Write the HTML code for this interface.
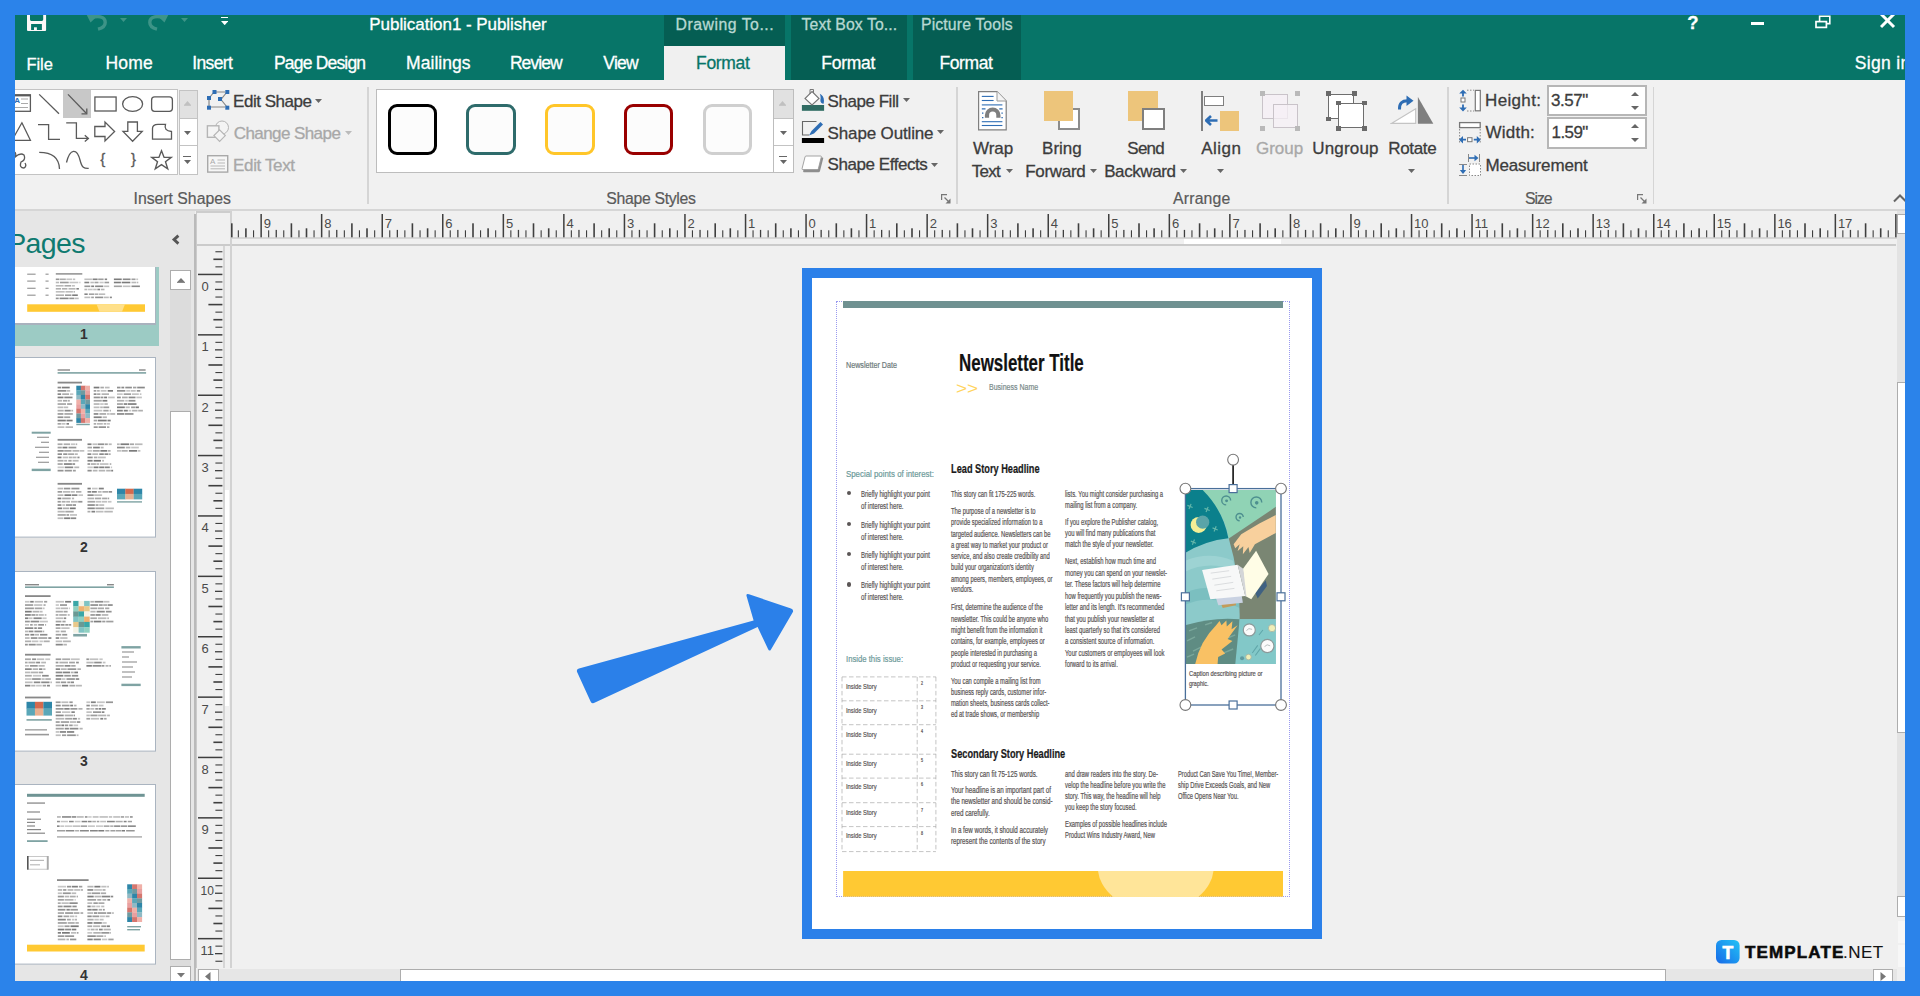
<!DOCTYPE html>
<html lang="en"><head><meta charset="utf-8"><title>Publication1 - Publisher</title>
<style>
html,body{margin:0;padding:0}
body{width:1920px;height:996px;overflow:hidden;background:#2b83ea;position:relative;font-family:"Liberation Sans",sans-serif}
#win{position:absolute;left:15px;top:15px;width:1890px;height:966px;overflow:hidden;background:#f0f0f0}
#abs{position:absolute;left:-15px;top:-15px;width:1920px;height:996px}
.t{position:absolute;white-space:nowrap;display:block}
.r{position:absolute;display:block;box-sizing:border-box}
.doc{position:absolute;transform-origin:0 0;white-space:nowrap;display:block}
</style></head>
<body>
<div id="win"><div id="abs">
<div class="r" style="left:15.0px;top:15.0px;width:1890.0px;height:65.0px;background:#077568;"></div>
<div class="r" style="left:664.0px;top:15.0px;width:121.0px;height:65.0px;background:#055e53;"></div>
<div class="r" style="left:791.0px;top:15.0px;width:116.0px;height:65.0px;background:#055e53;"></div>
<div class="r" style="left:913.0px;top:15.0px;width:108.0px;height:65.0px;background:#055e53;"></div>
<div class="r" style="left:664.0px;top:46.0px;width:121.0px;height:35.0px;background:#f0f0f0;"></div>
<svg class="r" style="left:27.0px;top:13.0px;" width="20" height="19" viewBox="0 0 20 19"><path d="M0 0H19.1V17Q19.1 18 18.1 18H1Q0 18 0 17Z M3 0V6.6Q3 7.9 4.3 7.9H14.9Q16.2 7.9 16.2 6.6V0Z M4.1 11V17H14.9V11Z" fill="#fbf7f7" fill-rule="evenodd"/><rect x="7" y="14.3" width="2.9" height="3" fill="#fbf7f7"/></svg>
<svg class="r" style="left:86.0px;top:13.0px;" width="24" height="20" viewBox="0 0 24 20"><path d="M5 5.2 C11 2.5 19.2 3 19.2 9.5 C19.2 13.5 16 15.2 12 16.2" fill="none" stroke="#3d9487" stroke-width="3.4"/><path d="M0.5 1.5 H13 L4.5 9.5Z" fill="#3d9487"/></svg>
<svg class="r" style="left:120.0px;top:18.0px;" width="7" height="4" viewBox="0 0 7 4"><path d="M0 0H7L3.5 4Z" fill="#3d9487"/></svg>
<svg class="r" style="left:148.0px;top:13.0px;" width="24" height="20" viewBox="0 0 24 20"><path d="M16 5.2 C10 2.5 1.8 3 1.8 9.5 C1.8 13.5 5 15.2 9 16.2" fill="none" stroke="#3d9487" stroke-width="3.4"/><path d="M20.5 1.5 H8 L16.5 9.5Z" fill="#3d9487"/></svg>
<svg class="r" style="left:181.0px;top:18.0px;" width="7" height="4" viewBox="0 0 7 4"><path d="M0 0H7L3.5 4Z" fill="#3d9487"/></svg>
<div class="r" style="left:221.0px;top:16.7px;width:7.4px;height:1.4px;background:#fff;"></div>
<svg class="r" style="left:221.0px;top:20.7px;" width="7.4" height="4.2" viewBox="0 0 7.4 4.2"><path d="M0 0H7.4L3.7 4.2Z" fill="#fff"/></svg>
<span class="t" style="left:369.3px;top:16.1px;font-size:17px;line-height:17px;letter-spacing:-0.05px;color:#fff;-webkit-text-stroke:0.3px #fff;">Publication1 - Publisher</span>
<span class="t" style="left:675.5px;top:17.1px;font-size:15.8px;line-height:15.8px;letter-spacing:0.52px;color:#b7d8d2;-webkit-text-stroke:0.3px #b7d8d2;">Drawing To...</span>
<span class="t" style="left:801.6px;top:17.1px;font-size:15.8px;line-height:15.8px;letter-spacing:0.08px;color:#b7d8d2;-webkit-text-stroke:0.3px #b7d8d2;">Text Box To...</span>
<span class="t" style="left:921.0px;top:17.1px;font-size:15.8px;line-height:15.8px;letter-spacing:0.13px;color:#b7d8d2;-webkit-text-stroke:0.3px #b7d8d2;">Picture Tools</span>
<span class="t" style="left:26.4px;top:56.1px;font-size:16.5px;line-height:16.5px;letter-spacing:-0.01px;color:#fff;-webkit-text-stroke:0.3px #fff;">File</span>
<span class="t" style="left:105.5px;top:55.1px;font-size:17.5px;line-height:17.5px;letter-spacing:0.16px;color:#fff;-webkit-text-stroke:0.3px #fff;">Home</span>
<span class="t" style="left:192.3px;top:55.1px;font-size:17.5px;line-height:17.5px;letter-spacing:-0.65px;color:#fff;-webkit-text-stroke:0.3px #fff;">Insert</span>
<span class="t" style="left:274.0px;top:55.1px;font-size:17.5px;line-height:17.5px;letter-spacing:-0.81px;color:#fff;-webkit-text-stroke:0.3px #fff;">Page Design</span>
<span class="t" style="left:406.1px;top:55.1px;font-size:17.5px;line-height:17.5px;letter-spacing:0.04px;color:#fff;-webkit-text-stroke:0.3px #fff;">Mailings</span>
<span class="t" style="left:509.9px;top:55.1px;font-size:17.5px;line-height:17.5px;letter-spacing:-0.94px;color:#fff;-webkit-text-stroke:0.3px #fff;">Review</span>
<span class="t" style="left:603.3px;top:55.1px;font-size:17.5px;line-height:17.5px;letter-spacing:-0.75px;color:#fff;-webkit-text-stroke:0.3px #fff;">View</span>
<span class="t" style="left:696.1px;top:55.1px;font-size:17.5px;line-height:17.5px;letter-spacing:-0.35px;color:#077568;-webkit-text-stroke:0.3px #077568;">Format</span>
<span class="t" style="left:821.3px;top:55.1px;font-size:17.5px;line-height:17.5px;letter-spacing:-0.28px;color:#fff;-webkit-text-stroke:0.3px #fff;">Format</span>
<span class="t" style="left:939.4px;top:55.1px;font-size:17.5px;line-height:17.5px;letter-spacing:-0.39px;color:#fff;-webkit-text-stroke:0.3px #fff;">Format</span>
<span class="t" style="left:1854.8px;top:55.1px;font-size:17.5px;line-height:17.5px;letter-spacing:0.31px;color:#fff;-webkit-text-stroke:0.3px #fff;">Sign in</span>
<span class="t" style="left:1687.2px;top:14.1px;font-size:18.5px;line-height:18.5px;letter-spacing:0.00px;color:#fff;-webkit-text-stroke:0.3px #fff;font-weight:bold;">?</span>
<div class="r" style="left:1751.0px;top:22.0px;width:13.0px;height:3.0px;background:#fff;"></div>
<svg class="r" style="left:1815.0px;top:13.0px;" width="16" height="16" viewBox="0 0 16 16"><path d="M4.6 8V3.2H14.8V10.6H11.8" fill="none" stroke="#fff" stroke-width="1.6"/><rect x="1" y="8.6" width="10.4" height="5.8" fill="none" stroke="#fff" stroke-width="1.7"/></svg>
<svg class="r" style="left:1880.0px;top:13.0px;" width="16" height="16" viewBox="0 0 16 16"><path d="M1 1L14 14M14 1L1 14" stroke="#fff" stroke-width="3"/></svg>
<div class="r" style="left:15.0px;top:80.0px;width:1890.0px;height:129.5px;background:#f1f1f1;"></div>
<div class="r" style="left:15.0px;top:209.0px;width:1890.0px;height:1.6px;background:#d6d6d6;"></div>
<div class="r" style="left:367.3px;top:86.5px;width:1.6px;height:117.0px;background:#d5d5d5;"></div>
<div class="r" style="left:956.0px;top:86.5px;width:1.6px;height:117.0px;background:#d5d5d5;"></div>
<div class="r" style="left:1447.2px;top:86.5px;width:1.6px;height:117.0px;background:#d5d5d5;"></div>
<div class="r" style="left:1652.6px;top:86.5px;width:1.6px;height:117.0px;background:#d5d5d5;"></div>
<div class="r" style="left:10.0px;top:89.0px;width:167.8px;height:85.7px;background:#fff;border:1px solid #c3c3c3;"></div>
<div class="r" style="left:63.2px;top:90.2px;width:27.8px;height:27.6px;background:#c8c8c8;"></div>
<svg class="r" style="left:0;top:0" width="200" height="180" viewBox="0 0 200 180"><rect x="9" y="94.9" width="21.4" height="16.4" fill="#fff" stroke="#5a5a5a" stroke-width="1.3"/><rect x="9" y="94.4" width="21.8" height="2" fill="#5a5a5a"/><path d="M21 99H28M21 103.5H28M15 107.5H28" stroke="#aaa" stroke-width="1"/><path d="M39.2 94.4L59 113.7" fill="none" stroke="#5a5a5a" stroke-width="1.3" stroke-width="1.1"/><path d="M68 94.4L86 113" fill="none" stroke="#5a5a5a" stroke-width="1.3" stroke-width="1.1"/><path d="M86.8 108.5V113.8H81.5" fill="none" stroke="#5a5a5a" stroke-width="1.3" stroke-width="1.6"/><rect x="94.9" y="97" width="21.2" height="14" fill="none" stroke="#5a5a5a" stroke-width="1.3" stroke-width="1.5"/><ellipse cx="132.6" cy="104" rx="10" ry="7.3" fill="none" stroke="#5a5a5a" stroke-width="1.3"/><rect x="151.6" y="96.9" width="20.8" height="14.4" rx="3" fill="none" stroke="#5a5a5a" stroke-width="1.3"/><path d="M21.9 122.8L30.4 140.3H12Z" fill="none" stroke="#5a5a5a" stroke-width="1.3" stroke-width="1.4"/><path d="M38 124.6H48.6V139.4H60" fill="none" stroke="#5a5a5a" stroke-width="1.3" stroke-width="1.1"/><path d="M66.2 122.8H76.4V138.4H88.4" fill="none" stroke="#5a5a5a" stroke-width="1.3" stroke-width="1.2"/><path d="M84.8 135.3L88.4 138.4L84.8 141.5" fill="none" stroke="#5a5a5a" stroke-width="1.3" stroke-width="1.2"/><path d="M94.8 126.5H105V122L114.6 131.5L105 141V136.5H94.8Z" fill="none" stroke="#5a5a5a" stroke-width="1.3" stroke-width="1.4"/><path d="M127.8 122H137.4V131.4H142.2L132.6 141.2L123 131.4H127.8Z" fill="none" stroke="#5a5a5a" stroke-width="1.3" stroke-width="1.4"/><path d="M152.5 139.2V128.5Q152.5 124.3 158 124.3H165.5Q163.5 131 171.5 131.5V139.2Z" fill="none" stroke="#5a5a5a" stroke-width="1.3" stroke-width="1.3"/><path d="M15 152 Q17 156 14 158 Q20 152 24 155 Q26 160 21 162 Q19 168 24 168 Q27 166 25 163" fill="none" stroke="#5a5a5a" stroke-width="1.3" stroke-width="1.2"/><path d="M39.2 152.4Q59 152.4 59.5 169" fill="none" stroke="#5a5a5a" stroke-width="1.3" stroke-width="1.1"/><path d="M66.5 162.5C70 148 77 148 80 160C82 168 84 168.5 88.7 168.3" fill="none" stroke="#5a5a5a" stroke-width="1.3" stroke-width="1.3"/></svg>
<span class="t" style="left:100.2px;top:151.1px;font-size:15px;line-height:15px;letter-spacing:0.00px;color:#5a5a5a;-webkit-text-stroke:0.3px #5a5a5a;">{</span>
<span class="t" style="left:131.1px;top:151.1px;font-size:15px;line-height:15px;letter-spacing:0.00px;color:#5a5a5a;-webkit-text-stroke:0.3px #5a5a5a;">}</span>
<svg class="r" style="left:150.0px;top:149.0px;" width="24" height="22" viewBox="0 0 24 22"><path d="M11.5 1.8L14.1 8.4H21.2L15.5 12.8L17.7 19.8L11.5 15.6L5.3 19.8L7.5 12.8L1.8 8.4H8.9Z" fill="none" stroke="#5a5a5a" stroke-width="1.4"/></svg>
<span class="t" style="left:14.2px;top:96.6px;font-size:8px;line-height:8px;font-weight:bold;color:#2e6db4">A</span>
<div class="r" style="left:178.8px;top:89.5px;width:18.8px;height:85.2px;background:#fff;border:1px solid #c3c3c3;"></div>
<div class="r" style="left:179.8px;top:90.5px;width:16.8px;height:27.5px;background:#e1e1e1;"></div>
<div class="r" style="left:179.8px;top:118.0px;width:16.8px;height:1.0px;background:#c3c3c3;"></div>
<div class="r" style="left:179.8px;top:145.2px;width:16.8px;height:1.0px;background:#c3c3c3;"></div>
<svg class="r" style="left:184.0px;top:101.0px;" width="7" height="5" viewBox="0 0 7 5"><path d="M0 4H7L3.5 0Z" fill="#c0c0c0"/><rect x="0" y="4.2" width="7" height="0.8" fill="#c0c0c0"/></svg>
<svg class="r" style="left:183.9px;top:130.7px;" width="7" height="4" viewBox="0 0 7 4"><path d="M0 0H7L3.5 4Z" fill="#666"/></svg>
<div class="r" style="left:183.4px;top:155.5px;width:8.0px;height:1.3px;background:#666;"></div>
<svg class="r" style="left:183.9px;top:160.0px;" width="7" height="4" viewBox="0 0 7 4"><path d="M0 0H7L3.5 4Z" fill="#666"/></svg>
<svg class="r" style="left:206.9px;top:90.0px;" width="23" height="20" viewBox="0 0 23 20"><path d="M8 2H18M20 2L14 9.5L20 17M3 17H18M2 9V17M3 7L7 2" stroke="#888" stroke-width="1.2" fill="none"/><rect x="5.5" y="0" width="4" height="4" fill="#2e6db4"/><rect x="18.3" y="0" width="4" height="4" fill="#2e6db4"/><rect x="0" y="6" width="4" height="4" fill="#2e6db4"/><rect x="11" y="7" width="4" height="4" fill="#2e6db4"/><rect x="0" y="15.7" width="4" height="4" fill="#2e6db4"/><rect x="18.3" y="15.7" width="4" height="4" fill="#2e6db4"/></svg>
<span class="t" style="left:233.1px;top:93.1px;font-size:17px;line-height:17px;letter-spacing:-0.49px;color:#3c3c3c;-webkit-text-stroke:0.3px #3c3c3c;">Edit Shape</span>
<svg class="r" style="left:315.0px;top:98.6px;" width="7" height="4" viewBox="0 0 7 4"><path d="M0 0H7L3.5 4Z" fill="#666"/></svg>
<svg class="r" style="left:206.0px;top:120.0px;" width="24" height="24" viewBox="0 0 24 24"><circle cx="16" cy="7.5" r="6.5" fill="#f4f4f4" stroke="#b5b5b5" stroke-width="1"/><rect x="1.4" y="5.8" width="11.5" height="11.5" fill="#f4f4f4" stroke="#b5b5b5" stroke-width="1.4"/><path d="M13.6 9.9L19.3 15.6L13.6 21.3L7.9 15.6Z" fill="#f4f4f4" stroke="#b5b5b5" stroke-width="1.2"/></svg>
<span class="t" style="left:233.7px;top:125.1px;font-size:17px;line-height:17px;letter-spacing:-0.57px;color:#a8a8a8;-webkit-text-stroke:0.3px #a8a8a8;">Change Shape</span>
<svg class="r" style="left:344.8px;top:130.7px;" width="7" height="4" viewBox="0 0 7 4"><path d="M0 0H7L3.5 4Z" fill="#bbb"/></svg>
<svg class="r" style="left:206.9px;top:155.0px;" width="22" height="18" viewBox="0 0 22 18"><rect x="0.7" y="0.7" width="20" height="16.4" fill="#f6f6f6" stroke="#a9a9a9" stroke-width="1.4"/><path d="M10.5 5H18M10.5 8H18M3.5 11H18M3.5 13.8H18" stroke="#b8b8b8" stroke-width="1"/></svg>
<span class="t" style="left:210px;top:157.5px;font-size:8px;line-height:8px;color:#aaa">A</span>
<span class="t" style="left:233.1px;top:157.1px;font-size:17px;line-height:17px;letter-spacing:-0.37px;color:#a8a8a8;-webkit-text-stroke:0.3px #a8a8a8;">Edit Text</span>
<span class="t" style="left:133.5px;top:191.1px;font-size:15.8px;line-height:15.8px;letter-spacing:-0.01px;color:#5a5a5a;-webkit-text-stroke:0.2px #5a5a5a;">Insert Shapes</span>
<div class="r" style="left:376.0px;top:89.0px;width:397.5px;height:83.5px;background:#fff;border:1px solid #bdbdbd;"></div>
<div class="r" style="left:387.5px;top:104.0px;width:49.5px;height:50.5px;background:#fcfcfc;border:3px solid #000;border-radius:9px;"></div>
<div class="r" style="left:466.2px;top:104.0px;width:49.5px;height:50.5px;background:#fcfcfc;border:3px solid #2e6b6b;border-radius:9px;"></div>
<div class="r" style="left:545.0px;top:104.0px;width:49.5px;height:50.5px;background:#fcfcfc;border:3px solid #ffc629;border-radius:9px;"></div>
<div class="r" style="left:623.8px;top:104.0px;width:49.5px;height:50.5px;background:#fcfcfc;border:3px solid #990000;border-radius:9px;"></div>
<div class="r" style="left:702.5px;top:104.0px;width:49.5px;height:50.5px;background:#fcfcfc;border:3px solid #cfcfcf;border-radius:9px;"></div>
<div class="r" style="left:773.0px;top:89.0px;width:20.5px;height:83.5px;background:#fff;border:1px solid #bdbdbd;"></div>
<div class="r" style="left:774.0px;top:90.0px;width:18.5px;height:28.0px;background:#e1e1e1;"></div>
<div class="r" style="left:774.0px;top:118.0px;width:18.5px;height:1.0px;background:#c3c3c3;"></div>
<div class="r" style="left:774.0px;top:145.0px;width:18.5px;height:1.0px;background:#c3c3c3;"></div>
<svg class="r" style="left:779.3px;top:100.5px;" width="7" height="5" viewBox="0 0 7 5"><path d="M0 4H7L3.5 0Z" fill="#c0c0c0"/><rect x="0" y="4.2" width="7" height="0.8" fill="#c0c0c0"/></svg>
<svg class="r" style="left:779.5px;top:130.7px;" width="7" height="4" viewBox="0 0 7 4"><path d="M0 0H7L3.5 4Z" fill="#666"/></svg>
<div class="r" style="left:779.0px;top:155.5px;width:8.0px;height:1.3px;background:#666;"></div>
<svg class="r" style="left:779.5px;top:160.0px;" width="7" height="4" viewBox="0 0 7 4"><path d="M0 0H7L3.5 4Z" fill="#666"/></svg>
<span class="t" style="left:606.3px;top:191.1px;font-size:15.8px;line-height:15.8px;letter-spacing:-0.32px;color:#5a5a5a;-webkit-text-stroke:0.2px #5a5a5a;">Shape Styles</span>
<svg class="r" style="left:941.0px;top:194.0px;" width="10" height="10" viewBox="0 0 10 10"><path d="M0.6 6V0.6H6" fill="none" stroke="#777" stroke-width="1.2"/><path d="M3.5 3.5L8 8" stroke="#777" stroke-width="1.2"/><path d="M9.5 4.5V9.5H4.5Z" fill="#777"/></svg>
<svg class="r" style="left:801.0px;top:88.0px;" width="24" height="24" viewBox="0 0 24 24"><rect x="0.9" y="17" width="22.2" height="5.8" fill="#2f6b62"/><path d="M11 3.5L18 10.5L11 17L4 10.5Z" fill="#fff" stroke="#777" stroke-width="1.1"/><path d="M9 6V1.5H12.5V5" fill="none" stroke="#777" stroke-width="1"/><path d="M18.8 5.8Q24.2 8.5 22.6 15.8Q18.6 15.4 19.6 10.5Q19.8 8 18.8 5.8Z" fill="#2e6db4"/></svg>
<span class="t" style="left:827.6px;top:93.1px;font-size:17px;line-height:17px;letter-spacing:-0.47px;color:#3c3c3c;-webkit-text-stroke:0.3px #3c3c3c;">Shape Fill</span>
<svg class="r" style="left:902.9px;top:98.3px;" width="7" height="4" viewBox="0 0 7 4"><path d="M0 0H7L3.5 4Z" fill="#666"/></svg>
<svg class="r" style="left:801.0px;top:120.0px;" width="24" height="24" viewBox="0 0 24 24"><path d="M15.5 1.5H1.5V15H8" fill="none" stroke="#666" stroke-width="1.1"/><path d="M8 15.5L10.5 11L19.5 2L22 4.5L13 13.5Z" fill="#2e6db4"/><rect x="0.9" y="18" width="22.2" height="5" fill="#000"/></svg>
<span class="t" style="left:827.6px;top:125.1px;font-size:17px;line-height:17px;letter-spacing:-0.15px;color:#3c3c3c;-webkit-text-stroke:0.3px #3c3c3c;">Shape Outline</span>
<svg class="r" style="left:937.0px;top:130.4px;" width="7" height="4" viewBox="0 0 7 4"><path d="M0 0H7L3.5 4Z" fill="#666"/></svg>
<svg class="r" style="left:801.0px;top:155.0px;" width="24" height="19" viewBox="0 0 24 19"><path d="M6 2.5H21.5Q22.5 2.5 22.2 3.6L19 16Q18.7 17.2 17.5 17.2H3Q1.8 17.2 2.2 16L5 3.5Q5.3 2.5 6 2.5Z" fill="#8e8e8e"/><path d="M5 1H19.5Q20.6 1 20.3 2.1L17.4 13.6Q17.1 14.6 16 14.6H2Q0.8 14.6 1.1 13.5L4 2Q4.3 1 5 1Z" fill="#fff" stroke="#9a9a9a" stroke-width="0.9"/></svg>
<span class="t" style="left:827.6px;top:156.1px;font-size:17px;line-height:17px;letter-spacing:-0.45px;color:#3c3c3c;-webkit-text-stroke:0.3px #3c3c3c;">Shape Effects</span>
<svg class="r" style="left:931.3px;top:162.7px;" width="7" height="4" viewBox="0 0 7 4"><path d="M0 0H7L3.5 4Z" fill="#666"/></svg>
<svg class="r" style="left:978.0px;top:91.0px;" width="29" height="40" viewBox="0 0 29 40"><path d="M0.6 0.6H19L28.2 10V38.9H0.6Z" fill="#fff" stroke="#7f7f7f" stroke-width="1.2"/><path d="M19 0.6V10H28.2" fill="#f4f4f4" stroke="#9a9a9a" stroke-width="1"/><path d="M3.8 5.4H15.6" stroke="#2e6db4" stroke-width="1.1"/><path d="M3.8 9.5H15.6" stroke="#2e6db4" stroke-width="1.1"/><path d="M3.8 13.9H24.4" stroke="#2e6db4" stroke-width="1.1"/><path d="M3.8 30.7H24.4" stroke="#2e6db4" stroke-width="1.1"/><path d="M3.8 34.5H24.4" stroke="#2e6db4" stroke-width="1.1"/><path d="M3.8 17.9H7.5M21.3 17.9H24.6" stroke="#2e6db4" stroke-width="1.3"/><path d="M4 22.2H5.4M23.4 22.2H24.8" stroke="#2e6db4" stroke-width="1.3"/><path d="M4 26.6H5.4M23.4 26.6H24.8" stroke="#2e6db4" stroke-width="1.3"/><path d="M6.9 26.8V24.2A7.8 7.8 0 0 1 22.5 24.2V26.8H18.3V24.2A3.6 3.6 0 0 0 11.1 24.2V26.8Z" fill="#7f7f7f"/></svg>
<span class="t" style="left:973.1px;top:140.1px;font-size:17px;line-height:17px;letter-spacing:-0.08px;color:#3c3c3c;-webkit-text-stroke:0.3px #3c3c3c;">Wrap</span>
<span class="t" style="left:971.8px;top:163.1px;font-size:17px;line-height:17px;letter-spacing:-0.78px;color:#3c3c3c;-webkit-text-stroke:0.3px #3c3c3c;">Text</span>
<svg class="r" style="left:1006.2px;top:168.7px;" width="7" height="4" viewBox="0 0 7 4"><path d="M0 0H7L3.5 4Z" fill="#666"/></svg>
<div class="r" style="left:1058.1px;top:108.3px;width:21.6px;height:22.2px;background:#fff;border:2px solid #8c8c8c;"></div>
<div class="r" style="left:1044.0px;top:91.0px;width:29.2px;height:30.0px;background:#edc57b;"></div>
<span class="t" style="left:1042.1px;top:140.1px;font-size:17px;line-height:17px;letter-spacing:-0.04px;color:#3c3c3c;-webkit-text-stroke:0.3px #3c3c3c;">Bring</span>
<span class="t" style="left:1025.2px;top:163.1px;font-size:17px;line-height:17px;letter-spacing:-0.30px;color:#3c3c3c;-webkit-text-stroke:0.3px #3c3c3c;">Forward</span>
<svg class="r" style="left:1090.1px;top:168.7px;" width="7" height="4" viewBox="0 0 7 4"><path d="M0 0H7L3.5 4Z" fill="#666"/></svg>
<div class="r" style="left:1128.1px;top:91.0px;width:30.0px;height:30.0px;background:#edc57b;"></div>
<div class="r" style="left:1142.3px;top:108.3px;width:22.4px;height:22.2px;background:#fff;border:2px solid #7f7f7f;"></div>
<span class="t" style="left:1127.3px;top:140.1px;font-size:17px;line-height:17px;letter-spacing:-0.76px;color:#3c3c3c;-webkit-text-stroke:0.3px #3c3c3c;">Send</span>
<span class="t" style="left:1104.2px;top:163.1px;font-size:17px;line-height:17px;letter-spacing:-0.41px;color:#3c3c3c;-webkit-text-stroke:0.3px #3c3c3c;">Backward</span>
<svg class="r" style="left:1179.9px;top:168.7px;" width="7" height="4" viewBox="0 0 7 4"><path d="M0 0H7L3.5 4Z" fill="#666"/></svg>
<div class="r" style="left:1200.9px;top:91.1px;width:1.8px;height:39.7px;background:#7f7f7f;"></div>
<div class="r" style="left:1204.1px;top:96.0px;width:19.8px;height:10.4px;background:#fff;border:1.6px solid #7f7f7f;"></div>
<div class="r" style="left:1220.0px;top:111.0px;width:18.9px;height:19.8px;background:#edc57b;"></div>
<svg class="r" style="left:1205.0px;top:115.0px;" width="13" height="11" viewBox="0 0 13 11"><path d="M12.5 5.5H3M6 1L1.2 5.5L6 10" fill="none" stroke="#2e6db4" stroke-width="2.6"/></svg>
<span class="t" style="left:1201.2px;top:140.1px;font-size:17px;line-height:17px;letter-spacing:0.49px;color:#3c3c3c;-webkit-text-stroke:0.3px #3c3c3c;">Align</span>
<svg class="r" style="left:1216.9px;top:168.9px;" width="7" height="4" viewBox="0 0 7 4"><path d="M0 0H7L3.5 4Z" fill="#666"/></svg>
<div class="r" style="left:1262.0px;top:93.5px;width:25.7px;height:25.0px;background:#f5f0f5;border:1px solid #c9c3c9;"></div>
<div class="r" style="left:1272.5px;top:103.5px;width:25.4px;height:24.7px;background:rgba(245,240,245,.75);border:1px solid #c9c3c9;"></div>
<div class="r" style="left:1260.1px;top:91.1px;width:4.7px;height:4.6px;background:#b9b9b9;"></div>
<div class="r" style="left:1295.3px;top:91.1px;width:4.7px;height:4.6px;background:#b9b9b9;"></div>
<div class="r" style="left:1260.1px;top:126.3px;width:4.7px;height:4.6px;background:#b9b9b9;"></div>
<div class="r" style="left:1295.3px;top:126.3px;width:4.7px;height:4.6px;background:#b9b9b9;"></div>
<span class="t" style="left:1256.0px;top:140.1px;font-size:17px;line-height:17px;letter-spacing:-0.04px;color:#a8a8a8;-webkit-text-stroke:0.3px #a8a8a8;">Group</span>
<div class="r" style="left:1328.1px;top:93.5px;width:26.0px;height:25.3px;background:#fff;border:1.4px solid #6e6e6e;"></div>
<div class="r" style="left:1338.0px;top:102.8px;width:26.0px;height:25.7px;background:#fff;border:1.4px solid #6e6e6e;"></div>
<div class="r" style="left:1326.0px;top:91.3px;width:4.6px;height:4.6px;background:#6a6a6a;"></div>
<div class="r" style="left:1352.0px;top:91.3px;width:4.6px;height:4.6px;background:#6a6a6a;"></div>
<div class="r" style="left:1326.0px;top:116.6px;width:4.6px;height:4.6px;background:#6a6a6a;"></div>
<div class="r" style="left:1336.0px;top:100.6px;width:4.6px;height:4.6px;background:#6a6a6a;"></div>
<div class="r" style="left:1362.0px;top:100.6px;width:4.6px;height:4.6px;background:#6a6a6a;"></div>
<div class="r" style="left:1336.0px;top:126.3px;width:4.6px;height:4.6px;background:#6a6a6a;"></div>
<div class="r" style="left:1362.0px;top:126.3px;width:4.6px;height:4.6px;background:#6a6a6a;"></div>
<span class="t" style="left:1312.2px;top:140.1px;font-size:17px;line-height:17px;letter-spacing:0.19px;color:#3c3c3c;-webkit-text-stroke:0.3px #3c3c3c;">Ungroup</span>
<svg class="r" style="left:1390.0px;top:94.0px;" width="46" height="32" viewBox="0 0 46 32"><path d="M1.4 29.4L25.7 14.7V29.4Z" fill="#fff" stroke="#c4c4c4" stroke-width="1.2"/><path d="M27.9 3V29.7H43.3Z" fill="#7f7f7f"/><path d="M9.5 15.5Q9 6.5 18 6.8" fill="none" stroke="#2e6db4" stroke-width="3"/><path d="M16.5 1.5L23.5 6.8L16.5 12Z" fill="#2e6db4"/></svg>
<span class="t" style="left:1388.3px;top:140.1px;font-size:17px;line-height:17px;letter-spacing:-0.36px;color:#3c3c3c;-webkit-text-stroke:0.3px #3c3c3c;">Rotate</span>
<svg class="r" style="left:1407.9px;top:168.9px;" width="7" height="4" viewBox="0 0 7 4"><path d="M0 0H7L3.5 4Z" fill="#666"/></svg>
<span class="t" style="left:1173.0px;top:191.1px;font-size:15.8px;line-height:15.8px;letter-spacing:0.19px;color:#5a5a5a;-webkit-text-stroke:0.2px #5a5a5a;">Arrange</span>
<div class="r" style="left:1547.2px;top:84.6px;width:99.8px;height:31.4px;background:#fff;border:2px solid #b6b6b6;"></div>
<span class="t" style="left:1551.1px;top:92.1px;font-size:17px;line-height:17px;letter-spacing:-0.47px;color:#3c3c3c;-webkit-text-stroke:0.3px #3c3c3c;">3.57"</span>
<div class="r" style="left:1547.2px;top:117.3px;width:99.8px;height:31.4px;background:#fff;border:2px solid #b6b6b6;"></div>
<span class="t" style="left:1551.5px;top:124.1px;font-size:17px;line-height:17px;letter-spacing:-0.56px;color:#3c3c3c;-webkit-text-stroke:0.3px #3c3c3c;">1.59"</span>
<svg class="r" style="left:1631.4px;top:91.6px;" width="8" height="4" viewBox="0 0 8 4"><path d="M0 4H8L4 0Z" fill="#666"/></svg>
<svg class="r" style="left:1631.4px;top:105.8px;" width="8" height="4" viewBox="0 0 8 4"><path d="M0 0H8L4 4Z" fill="#666"/></svg>
<svg class="r" style="left:1631.4px;top:124.4px;" width="8" height="4" viewBox="0 0 8 4"><path d="M0 4H8L4 0Z" fill="#666"/></svg>
<svg class="r" style="left:1631.4px;top:138.3px;" width="8" height="4" viewBox="0 0 8 4"><path d="M0 0H8L4 4Z" fill="#666"/></svg>
<span class="t" style="left:1485.0px;top:92.1px;font-size:17px;line-height:17px;letter-spacing:0.35px;color:#3c3c3c;-webkit-text-stroke:0.3px #3c3c3c;">Height:</span>
<span class="t" style="left:1485.5px;top:124.1px;font-size:17px;line-height:17px;letter-spacing:0.23px;color:#3c3c3c;-webkit-text-stroke:0.3px #3c3c3c;">Width:</span>
<span class="t" style="left:1485.4px;top:157.1px;font-size:17px;line-height:17px;letter-spacing:-0.16px;color:#3c3c3c;-webkit-text-stroke:0.3px #3c3c3c;">Measurement</span>
<span class="t" style="left:1525.1px;top:191.1px;font-size:15.8px;line-height:15.8px;letter-spacing:-1.12px;color:#5a5a5a;-webkit-text-stroke:0.2px #5a5a5a;">Size</span>
<svg class="r" style="left:1637.2px;top:194.2px;" width="10" height="10" viewBox="0 0 10 10"><path d="M0.6 6V0.6H6" fill="none" stroke="#777" stroke-width="1.2"/><path d="M3.5 3.5L8 8" stroke="#777" stroke-width="1.2"/><path d="M9.5 4.5V9.5H4.5Z" fill="#777"/></svg>
<svg class="r" style="left:1458.0px;top:88.5px;" width="24" height="24" viewBox="0 0 24 24"><path d="M5 0.8L8.8 4.6H1.2Z M5 22.4L8.8 18.6H1.2Z" fill="#2e6db4"/><path d="M5 3.5V7.5M5 15.5V19.5" stroke="#2e6db4" stroke-width="1.8"/><rect x="3" y="9" width="4" height="4" fill="#fff" stroke="#777" stroke-width="1"/><path d="M9 1.2H16M9 22H16" stroke="#888" stroke-width="1" stroke-dasharray="1.5 1.5"/><rect x="17.3" y="1.4" width="5" height="20.4" fill="#fff" stroke="#777" stroke-width="1.2"/></svg>
<svg class="r" style="left:1458.0px;top:120.5px;" width="24" height="24" viewBox="0 0 24 24"><rect x="1.6" y="1.6" width="20.6" height="5" fill="#fff" stroke="#777" stroke-width="1.3"/><path d="M1.6 8V22M22.2 8V22" stroke="#888" stroke-width="1" stroke-dasharray="1.5 1.5"/><path d="M1 18.7L5 14.9V22.5Z M22.8 18.7L18.8 14.9V22.5Z" fill="#2e6db4"/><path d="M4 18.7H8M15.8 18.7H20" stroke="#2e6db4" stroke-width="1.8"/><rect x="9.6" y="16.7" width="4.4" height="4" fill="#fff" stroke="#777" stroke-width="1"/></svg>
<svg class="r" style="left:1458.0px;top:152.5px;" width="24" height="24" viewBox="0 0 24 24"><rect x="11.5" y="11" width="11" height="11.5" fill="#fff" stroke="#888" stroke-width="1" stroke-dasharray="1.5 1.5"/><path d="M10.5 1V9M21.5 1V9" stroke="#888" stroke-width="1"/><path d="M11 5H17" stroke="#2e6db4" stroke-width="1.6"/><path d="M20.5 5L16.5 1.8V8.2Z" fill="#2e6db4"/><path d="M1 11.5H9M1 22.5H9" stroke="#888" stroke-width="1.2"/><path d="M5 12V17" stroke="#2e6db4" stroke-width="1.6"/><path d="M5 21L1.8 17H8.2Z" fill="#2e6db4"/></svg>
<svg class="r" style="left:1892.5px;top:193.5px;" width="14" height="9" viewBox="0 0 14 9"><path d="M1 7.5L7 1.5L13 7.5" fill="none" stroke="#666" stroke-width="2"/></svg>
<div class="r" style="left:15.0px;top:210.6px;width:1890.0px;height:771.0px;background:#f0f0f0;"></div>
<div class="r" style="left:15.0px;top:210.6px;width:179.8px;height:771.0px;background:#e6e6e6;"></div>
<span class="t" style="left:7.2px;top:229.1px;font-size:28.5px;line-height:28.5px;letter-spacing:-0.61px;color:#0f7a70;">Pages</span>
<svg class="r" style="left:171.0px;top:234.0px;" width="10" height="11" viewBox="0 0 10 11"><path d="M7.4 1.6L3 5.6L7.4 9.6" fill="none" stroke="#555" stroke-width="2.8"/></svg>
<div class="r" style="left:15.0px;top:267.0px;width:144.0px;height:79.0px;background:#9ccbc4;"></div>
<svg class="r" style="left:0;top:267px" width="160" height="57" viewBox="0 267 160 57"><rect x="15" y="260" width="140.5" height="63.3" fill="#fff"/><rect x="27.2" y="273.6" width="8.4" height="1.2" fill="#999"/><rect x="45.5" y="273.6" width="3.1" height="1.2" fill="#999"/><rect x="27.2" y="280.5" width="8.4" height="1.2" fill="#999"/><rect x="45.5" y="280.5" width="3.1" height="1.2" fill="#999"/><rect x="27.2" y="287.7" width="8.4" height="1.2" fill="#999"/><rect x="45.5" y="287.7" width="3.1" height="1.2" fill="#999"/><rect x="27.2" y="294.6" width="8.4" height="1.2" fill="#999"/><rect x="45.5" y="294.6" width="3.1" height="1.2" fill="#999"/><rect x="55.8" y="273.2" width="26.5" height="1.4" fill="#888"/><rect x="55.8" y="278.5" width="3.5" height="1.6" fill="rgba(70,70,70,0.57)"/><rect x="59.8" y="278.5" width="6.0" height="1.6" fill="rgba(70,70,70,0.45)"/><rect x="66.4" y="278.5" width="5.8" height="1.6" fill="rgba(70,70,70,0.32)"/><rect x="73.0" y="278.5" width="2.2" height="1.6" fill="rgba(70,70,70,0.34)"/><rect x="55.8" y="281.7" width="3.3" height="1.6" fill="rgba(70,70,70,0.39)"/><rect x="60.0" y="281.7" width="8.7" height="1.6" fill="rgba(70,70,70,0.54)"/><rect x="69.5" y="281.7" width="8.8" height="1.6" fill="rgba(70,70,70,0.32)"/><rect x="79.4" y="281.7" width="1.0" height="1.6" fill="rgba(70,70,70,0.36)"/><rect x="55.8" y="285.0" width="7.8" height="1.6" fill="rgba(70,70,70,0.38)"/><rect x="64.5" y="285.0" width="6.7" height="1.6" fill="rgba(70,70,70,0.46)"/><rect x="72.0" y="285.0" width="2.9" height="1.6" fill="rgba(70,70,70,0.33)"/><rect x="55.8" y="288.0" width="5.3" height="1.6" fill="rgba(70,70,70,0.43)"/><rect x="62.0" y="288.0" width="5.4" height="1.6" fill="rgba(70,70,70,0.43)"/><rect x="68.5" y="288.0" width="7.0" height="1.6" fill="rgba(70,70,70,0.40)"/><rect x="76.4" y="288.0" width="2.5" height="1.6" fill="rgba(70,70,70,0.67)"/><rect x="55.8" y="291.0" width="8.9" height="1.6" fill="rgba(70,70,70,0.35)"/><rect x="65.5" y="291.0" width="7.4" height="1.6" fill="rgba(70,70,70,0.36)"/><rect x="73.7" y="291.0" width="1.0" height="1.6" fill="rgba(70,70,70,0.58)"/><rect x="55.8" y="294.4" width="8.2" height="1.6" fill="rgba(70,70,70,0.43)"/><rect x="65.0" y="294.4" width="6.4" height="1.6" fill="rgba(70,70,70,0.54)"/><rect x="72.2" y="294.4" width="5.6" height="1.6" fill="rgba(70,70,70,0.70)"/><rect x="55.8" y="297.6" width="2.9" height="1.6" fill="rgba(70,70,70,0.59)"/><rect x="59.6" y="297.6" width="9.0" height="1.6" fill="rgba(70,70,70,0.65)"/><rect x="69.3" y="297.6" width="5.0" height="1.6" fill="rgba(70,70,70,0.58)"/><rect x="74.8" y="297.6" width="3.9" height="1.6" fill="rgba(70,70,70,0.37)"/><rect x="84.4" y="278.5" width="7.5" height="1.6" fill="rgba(70,70,70,0.35)"/><rect x="92.6" y="278.5" width="5.0" height="1.6" fill="rgba(70,70,70,0.67)"/><rect x="98.2" y="278.5" width="5.4" height="1.6" fill="rgba(70,70,70,0.53)"/><rect x="104.7" y="278.5" width="2.4" height="1.6" fill="rgba(70,70,70,0.66)"/><rect x="84.4" y="281.7" width="4.8" height="1.6" fill="rgba(70,70,70,0.67)"/><rect x="90.4" y="281.7" width="3.5" height="1.6" fill="rgba(70,70,70,0.37)"/><rect x="94.5" y="281.7" width="4.0" height="1.6" fill="rgba(70,70,70,0.50)"/><rect x="99.5" y="281.7" width="4.2" height="1.6" fill="rgba(70,70,70,0.30)"/><rect x="104.5" y="281.7" width="4.6" height="1.6" fill="rgba(70,70,70,0.54)"/><rect x="84.4" y="285.5" width="5.9" height="1.6" fill="rgba(70,70,70,0.56)"/><rect x="91.2" y="285.5" width="2.9" height="1.6" fill="rgba(70,70,70,0.68)"/><rect x="95.1" y="285.5" width="8.2" height="1.6" fill="rgba(70,70,70,0.64)"/><rect x="104.1" y="285.5" width="5.1" height="1.6" fill="rgba(70,70,70,0.34)"/><rect x="84.4" y="288.7" width="2.9" height="1.6" fill="rgba(70,70,70,0.39)"/><rect x="88.0" y="288.7" width="4.7" height="1.6" fill="rgba(70,70,70,0.32)"/><rect x="93.2" y="288.7" width="3.5" height="1.6" fill="rgba(70,70,70,0.34)"/><rect x="97.4" y="288.7" width="2.7" height="1.6" fill="rgba(70,70,70,0.67)"/><rect x="101.0" y="288.7" width="3.5" height="1.6" fill="rgba(70,70,70,0.41)"/><rect x="84.4" y="293.4" width="3.3" height="1.6" fill="rgba(70,70,70,0.66)"/><rect x="88.9" y="293.4" width="5.5" height="1.6" fill="rgba(70,70,70,0.50)"/><rect x="95.0" y="293.4" width="3.2" height="1.6" fill="rgba(70,70,70,0.44)"/><rect x="98.8" y="293.4" width="6.4" height="1.6" fill="rgba(70,70,70,0.37)"/><rect x="84.4" y="296.6" width="5.9" height="1.6" fill="rgba(70,70,70,0.36)"/><rect x="91.2" y="296.6" width="2.7" height="1.6" fill="rgba(70,70,70,0.52)"/><rect x="95.1" y="296.6" width="8.1" height="1.6" fill="rgba(70,70,70,0.59)"/><rect x="103.9" y="296.6" width="4.9" height="1.6" fill="rgba(70,70,70,0.37)"/><rect x="109.8" y="296.6" width="2.1" height="1.6" fill="rgba(70,70,70,0.63)"/><rect x="113.9" y="278.5" width="7.8" height="1.6" fill="rgba(70,70,70,0.71)"/><rect x="122.8" y="278.5" width="7.7" height="1.6" fill="rgba(70,70,70,0.64)"/><rect x="131.5" y="278.5" width="4.0" height="1.6" fill="rgba(70,70,70,0.52)"/><rect x="136.3" y="278.5" width="1.8" height="1.6" fill="rgba(70,70,70,0.31)"/><rect x="113.9" y="281.7" width="7.0" height="1.6" fill="rgba(70,70,70,0.70)"/><rect x="121.7" y="281.7" width="8.6" height="1.6" fill="rgba(70,70,70,0.71)"/><rect x="131.5" y="281.7" width="4.9" height="1.6" fill="rgba(70,70,70,0.39)"/><rect x="137.0" y="281.7" width="1.3" height="1.6" fill="rgba(70,70,70,0.39)"/><rect x="113.9" y="285.5" width="8.0" height="1.6" fill="rgba(70,70,70,0.50)"/><rect x="122.8" y="285.5" width="7.7" height="1.6" fill="rgba(70,70,70,0.34)"/><rect x="131.5" y="285.5" width="8.4" height="1.6" fill="rgba(70,70,70,0.63)"/><rect x="27.2" y="304.3" width="117.8" height="7.5" fill="#ffc933"/><path d="M96.5 304.3H125L122 311.8H99.5Z" fill="#ffe08a"/></svg>
<div class="r" style="left:155px;top:267px;width:1px;height:57px;background:#aab4c0"></div><div class="r" style="left:15px;top:323px;width:141px;height:1.6px;background:#a9b2be"></div>
<span class="t" style="left:64px;width:40px;text-align:center;top:327.1px;font-size:14px;line-height:15px;font-weight:bold;color:#333">1</span>
<svg class="r" style="left:14px;top:356.3px" width="143" height="182" viewBox="14 356.3 143 182"><rect x="14.5" y="357.8" width="141" height="179.6" fill="#fff" stroke="#aab4c0" stroke-width="1"/><rect x="57.6" y="369.6" width="12.4" height="1.4" fill="#888"/><rect x="139.0" y="369.6" width="6.6" height="1.4" fill="#888"/><rect x="57.6" y="372.4" width="88.5" height="1.6" fill="#7fa3a3"/><rect x="57.6" y="382.0" width="24.4" height="1.8" fill="#888"/><rect x="57.6" y="387.0" width="3.7" height="1.7" fill="rgba(70,70,70,0.63)"/><rect x="62.0" y="387.0" width="7.7" height="1.7" fill="rgba(70,70,70,0.71)"/><rect x="57.6" y="390.3" width="8.7" height="1.7" fill="rgba(70,70,70,0.60)"/><rect x="66.9" y="390.3" width="3.3" height="1.7" fill="rgba(70,70,70,0.36)"/><rect x="57.6" y="393.6" width="3.5" height="1.7" fill="rgba(70,70,70,0.65)"/><rect x="62.2" y="393.6" width="6.8" height="1.7" fill="rgba(70,70,70,0.45)"/><rect x="69.9" y="393.6" width="3.4" height="1.7" fill="rgba(70,70,70,0.31)"/><rect x="57.6" y="396.9" width="5.9" height="1.7" fill="rgba(70,70,70,0.69)"/><rect x="64.3" y="396.9" width="8.2" height="1.7" fill="rgba(70,70,70,0.65)"/><rect x="57.6" y="400.2" width="4.4" height="1.7" fill="rgba(70,70,70,0.40)"/><rect x="62.9" y="400.2" width="4.2" height="1.7" fill="rgba(70,70,70,0.48)"/><rect x="67.7" y="400.2" width="2.1" height="1.7" fill="rgba(70,70,70,0.45)"/><rect x="57.6" y="403.5" width="8.4" height="1.7" fill="rgba(70,70,70,0.48)"/><rect x="67.1" y="403.5" width="5.0" height="1.7" fill="rgba(70,70,70,0.52)"/><rect x="57.6" y="406.8" width="5.4" height="1.7" fill="rgba(70,70,70,0.38)"/><rect x="63.5" y="406.8" width="4.7" height="1.7" fill="rgba(70,70,70,0.37)"/><rect x="57.6" y="410.1" width="6.1" height="1.7" fill="rgba(70,70,70,0.44)"/><rect x="64.6" y="410.1" width="6.1" height="1.7" fill="rgba(70,70,70,0.63)"/><rect x="71.3" y="410.1" width="1.8" height="1.7" fill="rgba(70,70,70,0.40)"/><rect x="57.6" y="413.4" width="5.8" height="1.7" fill="rgba(70,70,70,0.54)"/><rect x="64.4" y="413.4" width="8.4" height="1.7" fill="rgba(70,70,70,0.49)"/><rect x="57.6" y="416.7" width="5.8" height="1.7" fill="rgba(70,70,70,0.59)"/><rect x="64.2" y="416.7" width="6.0" height="1.7" fill="rgba(70,70,70,0.50)"/><rect x="57.6" y="420.0" width="8.2" height="1.7" fill="rgba(70,70,70,0.70)"/><rect x="66.5" y="420.0" width="6.1" height="1.7" fill="rgba(70,70,70,0.70)"/><rect x="57.6" y="423.3" width="3.3" height="1.7" fill="rgba(70,70,70,0.49)"/><rect x="61.4" y="423.3" width="4.1" height="1.7" fill="rgba(70,70,70,0.33)"/><rect x="66.5" y="423.3" width="2.5" height="1.7" fill="rgba(70,70,70,0.68)"/><rect x="57.6" y="426.6" width="6.8" height="1.7" fill="rgba(70,70,70,0.36)"/><rect x="65.5" y="426.6" width="7.5" height="1.7" fill="rgba(70,70,70,0.39)"/><rect x="76.3" y="386.0" width="4.7" height="4.8" fill="#2e86a8"/><rect x="80.8" y="386.0" width="4.7" height="4.8" fill="#d4766e"/><rect x="85.3" y="386.0" width="4.7" height="4.8" fill="#f0b0a8"/><rect x="76.3" y="390.6" width="4.7" height="4.8" fill="#5aa7b8"/><rect x="80.8" y="390.6" width="4.7" height="4.8" fill="#6f9aa0"/><rect x="85.3" y="390.6" width="4.7" height="4.8" fill="#e9a0a0"/><rect x="76.3" y="395.2" width="4.7" height="4.8" fill="#8fb9c4"/><rect x="80.8" y="395.2" width="4.7" height="4.8" fill="#2e86a8"/><rect x="85.3" y="395.2" width="4.7" height="4.8" fill="#d4766e"/><rect x="76.3" y="399.9" width="4.7" height="4.8" fill="#f0b0a8"/><rect x="80.8" y="399.9" width="4.7" height="4.8" fill="#5aa7b8"/><rect x="85.3" y="399.9" width="4.7" height="4.8" fill="#6f9aa0"/><rect x="76.3" y="404.5" width="4.7" height="4.8" fill="#e9a0a0"/><rect x="80.8" y="404.5" width="4.7" height="4.8" fill="#8fb9c4"/><rect x="85.3" y="404.5" width="4.7" height="4.8" fill="#2e86a8"/><rect x="76.3" y="409.1" width="4.7" height="4.8" fill="#d4766e"/><rect x="80.8" y="409.1" width="4.7" height="4.8" fill="#f0b0a8"/><rect x="85.3" y="409.1" width="4.7" height="4.8" fill="#5aa7b8"/><rect x="76.3" y="413.8" width="4.7" height="4.8" fill="#6f9aa0"/><rect x="80.8" y="413.8" width="4.7" height="4.8" fill="#e9a0a0"/><rect x="85.3" y="413.8" width="4.7" height="4.8" fill="#8fb9c4"/><rect x="76.3" y="418.4" width="4.7" height="4.8" fill="#2e86a8"/><rect x="80.8" y="418.4" width="4.7" height="4.8" fill="#d4766e"/><rect x="85.3" y="418.4" width="4.7" height="4.8" fill="#f0b0a8"/><rect x="76.3" y="424.0" width="13.5" height="1.5" fill="#7fa3a3"/><rect x="93.7" y="387.0" width="5.7" height="1.7" fill="rgba(70,70,70,0.72)"/><rect x="100.4" y="387.0" width="3.5" height="1.7" fill="rgba(70,70,70,0.48)"/><rect x="104.9" y="387.0" width="4.7" height="1.7" fill="rgba(70,70,70,0.38)"/><rect x="93.7" y="390.3" width="2.6" height="1.7" fill="rgba(70,70,70,0.53)"/><rect x="97.1" y="390.3" width="2.6" height="1.7" fill="rgba(70,70,70,0.44)"/><rect x="100.7" y="390.3" width="5.8" height="1.7" fill="rgba(70,70,70,0.33)"/><rect x="107.7" y="390.3" width="5.3" height="1.7" fill="rgba(70,70,70,0.71)"/><rect x="93.7" y="393.6" width="2.8" height="1.7" fill="rgba(70,70,70,0.63)"/><rect x="97.1" y="393.6" width="3.3" height="1.7" fill="rgba(70,70,70,0.48)"/><rect x="101.6" y="393.6" width="7.4" height="1.7" fill="rgba(70,70,70,0.41)"/><rect x="93.7" y="396.9" width="6.2" height="1.7" fill="rgba(70,70,70,0.59)"/><rect x="100.5" y="396.9" width="2.9" height="1.7" fill="rgba(70,70,70,0.59)"/><rect x="104.1" y="396.9" width="3.0" height="1.7" fill="rgba(70,70,70,0.69)"/><rect x="108.1" y="396.9" width="6.6" height="1.7" fill="rgba(70,70,70,0.34)"/><rect x="93.7" y="400.2" width="8.1" height="1.7" fill="rgba(70,70,70,0.49)"/><rect x="102.5" y="400.2" width="4.8" height="1.7" fill="rgba(70,70,70,0.69)"/><rect x="93.7" y="403.5" width="5.9" height="1.7" fill="rgba(70,70,70,0.40)"/><rect x="100.2" y="403.5" width="3.5" height="1.7" fill="rgba(70,70,70,0.32)"/><rect x="104.4" y="403.5" width="3.4" height="1.7" fill="rgba(70,70,70,0.43)"/><rect x="93.7" y="406.8" width="5.8" height="1.7" fill="rgba(70,70,70,0.37)"/><rect x="100.2" y="406.8" width="2.6" height="1.7" fill="rgba(70,70,70,0.41)"/><rect x="103.3" y="406.8" width="5.9" height="1.7" fill="rgba(70,70,70,0.53)"/><rect x="93.7" y="410.1" width="8.6" height="1.7" fill="rgba(70,70,70,0.34)"/><rect x="103.3" y="410.1" width="5.3" height="1.7" fill="rgba(70,70,70,0.51)"/><rect x="109.7" y="410.1" width="1.1" height="1.7" fill="rgba(70,70,70,0.51)"/><rect x="93.7" y="413.4" width="4.7" height="1.7" fill="rgba(70,70,70,0.65)"/><rect x="99.4" y="413.4" width="6.6" height="1.7" fill="rgba(70,70,70,0.47)"/><rect x="106.8" y="413.4" width="2.9" height="1.7" fill="rgba(70,70,70,0.35)"/><rect x="110.2" y="413.4" width="5.0" height="1.7" fill="rgba(70,70,70,0.41)"/><rect x="93.7" y="416.7" width="8.0" height="1.7" fill="rgba(70,70,70,0.67)"/><rect x="102.6" y="416.7" width="4.3" height="1.7" fill="rgba(70,70,70,0.40)"/><rect x="93.7" y="420.0" width="3.5" height="1.7" fill="rgba(70,70,70,0.49)"/><rect x="97.9" y="420.0" width="8.8" height="1.7" fill="rgba(70,70,70,0.71)"/><rect x="107.5" y="420.0" width="3.2" height="1.7" fill="rgba(70,70,70,0.71)"/><rect x="93.7" y="423.3" width="2.5" height="1.7" fill="rgba(70,70,70,0.46)"/><rect x="97.0" y="423.3" width="5.8" height="1.7" fill="rgba(70,70,70,0.38)"/><rect x="103.7" y="423.3" width="2.5" height="1.7" fill="rgba(70,70,70,0.41)"/><rect x="106.8" y="423.3" width="3.1" height="1.7" fill="rgba(70,70,70,0.32)"/><rect x="93.7" y="426.6" width="4.0" height="1.7" fill="rgba(70,70,70,0.55)"/><rect x="98.6" y="426.6" width="7.4" height="1.7" fill="rgba(70,70,70,0.58)"/><rect x="107.0" y="426.6" width="2.4" height="1.7" fill="rgba(70,70,70,0.46)"/><rect x="117.0" y="387.0" width="3.5" height="1.7" fill="rgba(70,70,70,0.60)"/><rect x="121.4" y="387.0" width="2.8" height="1.7" fill="rgba(70,70,70,0.65)"/><rect x="125.3" y="387.0" width="6.6" height="1.7" fill="rgba(70,70,70,0.61)"/><rect x="133.0" y="387.0" width="3.4" height="1.7" fill="rgba(70,70,70,0.52)"/><rect x="137.2" y="387.0" width="7.6" height="1.7" fill="rgba(70,70,70,0.64)"/><rect x="117.0" y="390.3" width="8.3" height="1.7" fill="rgba(70,70,70,0.59)"/><rect x="126.3" y="390.3" width="4.0" height="1.7" fill="rgba(70,70,70,0.31)"/><rect x="130.9" y="390.3" width="4.8" height="1.7" fill="rgba(70,70,70,0.34)"/><rect x="136.8" y="390.3" width="3.5" height="1.7" fill="rgba(70,70,70,0.56)"/><rect x="117.0" y="393.6" width="5.7" height="1.7" fill="rgba(70,70,70,0.30)"/><rect x="123.7" y="393.6" width="7.4" height="1.7" fill="rgba(70,70,70,0.51)"/><rect x="132.0" y="393.6" width="6.8" height="1.7" fill="rgba(70,70,70,0.33)"/><rect x="139.8" y="393.6" width="1.6" height="1.7" fill="rgba(70,70,70,0.33)"/><rect x="117.0" y="396.9" width="3.8" height="1.7" fill="rgba(70,70,70,0.61)"/><rect x="122.0" y="396.9" width="5.7" height="1.7" fill="rgba(70,70,70,0.46)"/><rect x="128.6" y="396.9" width="6.9" height="1.7" fill="rgba(70,70,70,0.62)"/><rect x="136.4" y="396.9" width="5.5" height="1.7" fill="rgba(70,70,70,0.33)"/><rect x="117.0" y="400.2" width="7.3" height="1.7" fill="rgba(70,70,70,0.43)"/><rect x="125.2" y="400.2" width="2.6" height="1.7" fill="rgba(70,70,70,0.33)"/><rect x="128.5" y="400.2" width="6.9" height="1.7" fill="rgba(70,70,70,0.59)"/><rect x="117.0" y="403.5" width="5.9" height="1.7" fill="rgba(70,70,70,0.50)"/><rect x="123.7" y="403.5" width="3.3" height="1.7" fill="rgba(70,70,70,0.68)"/><rect x="127.6" y="403.5" width="8.9" height="1.7" fill="rgba(70,70,70,0.69)"/><rect x="117.0" y="406.8" width="7.8" height="1.7" fill="rgba(70,70,70,0.71)"/><rect x="125.6" y="406.8" width="4.2" height="1.7" fill="rgba(70,70,70,0.39)"/><rect x="131.1" y="406.8" width="3.9" height="1.7" fill="rgba(70,70,70,0.54)"/><rect x="135.5" y="406.8" width="3.4" height="1.7" fill="rgba(70,70,70,0.70)"/><rect x="117.0" y="410.1" width="5.8" height="1.7" fill="rgba(70,70,70,0.67)"/><rect x="123.8" y="410.1" width="4.0" height="1.7" fill="rgba(70,70,70,0.68)"/><rect x="128.6" y="410.1" width="2.7" height="1.7" fill="rgba(70,70,70,0.30)"/><rect x="132.1" y="410.1" width="5.4" height="1.7" fill="rgba(70,70,70,0.43)"/><rect x="138.2" y="410.1" width="4.7" height="1.7" fill="rgba(70,70,70,0.43)"/><rect x="117.0" y="413.4" width="7.4" height="1.7" fill="rgba(70,70,70,0.65)"/><rect x="125.0" y="413.4" width="8.5" height="1.7" fill="rgba(70,70,70,0.60)"/><rect x="31.7" y="432.0" width="19.0" height="2" fill="#7fa3a3"/><rect x="31.7" y="469.0" width="19.0" height="2.4" fill="#7fa3a3"/><rect x="37.0" y="437.0" width="12.0" height="1.2" fill="#999"/><rect x="41.0" y="442.0" width="8.0" height="1.2" fill="#999"/><rect x="35.0" y="447.0" width="14.0" height="1.2" fill="#999"/><rect x="39.0" y="452.0" width="10.0" height="1.2" fill="#999"/><rect x="36.0" y="457.0" width="13.0" height="1.2" fill="#999"/><rect x="38.0" y="462.0" width="11.0" height="1.2" fill="#999"/><rect x="57.6" y="439.2" width="24.4" height="1.8" fill="#888"/><rect x="57.6" y="443.7" width="4.9" height="1.7" fill="rgba(70,70,70,0.47)"/><rect x="63.7" y="443.7" width="6.3" height="1.7" fill="rgba(70,70,70,0.45)"/><rect x="70.8" y="443.7" width="4.3" height="1.7" fill="rgba(70,70,70,0.32)"/><rect x="75.7" y="443.7" width="1.5" height="1.7" fill="rgba(70,70,70,0.42)"/><rect x="57.6" y="447.0" width="4.2" height="1.7" fill="rgba(70,70,70,0.51)"/><rect x="62.5" y="447.0" width="4.9" height="1.7" fill="rgba(70,70,70,0.70)"/><rect x="68.5" y="447.0" width="7.8" height="1.7" fill="rgba(70,70,70,0.56)"/><rect x="57.6" y="450.3" width="6.1" height="1.7" fill="rgba(70,70,70,0.60)"/><rect x="64.2" y="450.3" width="7.3" height="1.7" fill="rgba(70,70,70,0.49)"/><rect x="72.5" y="450.3" width="6.7" height="1.7" fill="rgba(70,70,70,0.42)"/><rect x="79.7" y="450.3" width="4.6" height="1.7" fill="rgba(70,70,70,0.35)"/><rect x="57.6" y="453.6" width="4.4" height="1.7" fill="rgba(70,70,70,0.61)"/><rect x="63.2" y="453.6" width="4.2" height="1.7" fill="rgba(70,70,70,0.58)"/><rect x="68.1" y="453.6" width="6.1" height="1.7" fill="rgba(70,70,70,0.47)"/><rect x="74.9" y="453.6" width="2.9" height="1.7" fill="rgba(70,70,70,0.39)"/><rect x="57.6" y="456.9" width="3.9" height="1.7" fill="rgba(70,70,70,0.68)"/><rect x="62.7" y="456.9" width="5.4" height="1.7" fill="rgba(70,70,70,0.36)"/><rect x="68.8" y="456.9" width="3.1" height="1.7" fill="rgba(70,70,70,0.44)"/><rect x="72.4" y="456.9" width="4.1" height="1.7" fill="rgba(70,70,70,0.41)"/><rect x="77.4" y="456.9" width="2.1" height="1.7" fill="rgba(70,70,70,0.61)"/><rect x="57.6" y="460.2" width="5.9" height="1.7" fill="rgba(70,70,70,0.46)"/><rect x="64.2" y="460.2" width="2.9" height="1.7" fill="rgba(70,70,70,0.42)"/><rect x="68.3" y="460.2" width="3.3" height="1.7" fill="rgba(70,70,70,0.51)"/><rect x="72.6" y="460.2" width="6.0" height="1.7" fill="rgba(70,70,70,0.39)"/><rect x="57.6" y="463.5" width="5.1" height="1.7" fill="rgba(70,70,70,0.49)"/><rect x="63.9" y="463.5" width="8.0" height="1.7" fill="rgba(70,70,70,0.67)"/><rect x="72.4" y="463.5" width="2.7" height="1.7" fill="rgba(70,70,70,0.60)"/><rect x="57.6" y="466.8" width="6.3" height="1.7" fill="rgba(70,70,70,0.30)"/><rect x="64.7" y="466.8" width="8.5" height="1.7" fill="rgba(70,70,70,0.65)"/><rect x="74.3" y="466.8" width="4.9" height="1.7" fill="rgba(70,70,70,0.40)"/><rect x="57.6" y="470.1" width="5.9" height="1.7" fill="rgba(70,70,70,0.59)"/><rect x="64.7" y="470.1" width="7.2" height="1.7" fill="rgba(70,70,70,0.57)"/><rect x="72.9" y="470.1" width="2.9" height="1.7" fill="rgba(70,70,70,0.53)"/><rect x="87.5" y="443.7" width="4.0" height="1.7" fill="rgba(70,70,70,0.69)"/><rect x="92.5" y="443.7" width="4.5" height="1.7" fill="rgba(70,70,70,0.35)"/><rect x="97.6" y="443.7" width="6.6" height="1.7" fill="rgba(70,70,70,0.59)"/><rect x="104.8" y="443.7" width="3.0" height="1.7" fill="rgba(70,70,70,0.52)"/><rect x="108.7" y="443.7" width="3.0" height="1.7" fill="rgba(70,70,70,0.39)"/><rect x="87.5" y="447.0" width="4.5" height="1.7" fill="rgba(70,70,70,0.49)"/><rect x="93.1" y="447.0" width="6.7" height="1.7" fill="rgba(70,70,70,0.67)"/><rect x="100.7" y="447.0" width="2.9" height="1.7" fill="rgba(70,70,70,0.40)"/><rect x="87.5" y="450.3" width="4.5" height="1.7" fill="rgba(70,70,70,0.31)"/><rect x="92.8" y="450.3" width="6.9" height="1.7" fill="rgba(70,70,70,0.48)"/><rect x="100.4" y="450.3" width="6.8" height="1.7" fill="rgba(70,70,70,0.69)"/><rect x="107.9" y="450.3" width="2.7" height="1.7" fill="rgba(70,70,70,0.44)"/><rect x="87.5" y="453.6" width="3.8" height="1.7" fill="rgba(70,70,70,0.63)"/><rect x="92.3" y="453.6" width="5.8" height="1.7" fill="rgba(70,70,70,0.39)"/><rect x="99.3" y="453.6" width="4.5" height="1.7" fill="rgba(70,70,70,0.64)"/><rect x="104.5" y="453.6" width="3.9" height="1.7" fill="rgba(70,70,70,0.62)"/><rect x="109.1" y="453.6" width="1.5" height="1.7" fill="rgba(70,70,70,0.51)"/><rect x="87.5" y="456.9" width="5.2" height="1.7" fill="rgba(70,70,70,0.58)"/><rect x="93.9" y="456.9" width="3.5" height="1.7" fill="rgba(70,70,70,0.47)"/><rect x="98.0" y="456.9" width="7.8" height="1.7" fill="rgba(70,70,70,0.36)"/><rect x="87.5" y="460.2" width="5.1" height="1.7" fill="rgba(70,70,70,0.68)"/><rect x="93.7" y="460.2" width="7.3" height="1.7" fill="rgba(70,70,70,0.72)"/><rect x="102.1" y="460.2" width="1.9" height="1.7" fill="rgba(70,70,70,0.38)"/><rect x="87.5" y="463.5" width="2.7" height="1.7" fill="rgba(70,70,70,0.58)"/><rect x="91.0" y="463.5" width="4.9" height="1.7" fill="rgba(70,70,70,0.44)"/><rect x="96.5" y="463.5" width="2.5" height="1.7" fill="rgba(70,70,70,0.42)"/><rect x="99.8" y="463.5" width="8.7" height="1.7" fill="rgba(70,70,70,0.35)"/><rect x="109.7" y="463.5" width="1.6" height="1.7" fill="rgba(70,70,70,0.45)"/><rect x="87.5" y="466.8" width="5.3" height="1.7" fill="rgba(70,70,70,0.32)"/><rect x="93.6" y="466.8" width="4.9" height="1.7" fill="rgba(70,70,70,0.69)"/><rect x="99.2" y="466.8" width="4.9" height="1.7" fill="rgba(70,70,70,0.68)"/><rect x="104.6" y="466.8" width="5.2" height="1.7" fill="rgba(70,70,70,0.64)"/><rect x="110.8" y="466.8" width="1.3" height="1.7" fill="rgba(70,70,70,0.31)"/><rect x="87.5" y="470.1" width="4.2" height="1.7" fill="rgba(70,70,70,0.61)"/><rect x="92.8" y="470.1" width="4.7" height="1.7" fill="rgba(70,70,70,0.41)"/><rect x="98.7" y="470.1" width="6.5" height="1.7" fill="rgba(70,70,70,0.41)"/><rect x="106.2" y="470.1" width="4.6" height="1.7" fill="rgba(70,70,70,0.42)"/><rect x="111.2" y="470.1" width="1.9" height="1.7" fill="rgba(70,70,70,0.68)"/><rect x="117.0" y="443.7" width="2.7" height="1.7" fill="rgba(70,70,70,0.40)"/><rect x="120.5" y="443.7" width="8.7" height="1.7" fill="rgba(70,70,70,0.70)"/><rect x="130.0" y="443.7" width="4.1" height="1.7" fill="rgba(70,70,70,0.48)"/><rect x="135.0" y="443.7" width="7.5" height="1.7" fill="rgba(70,70,70,0.38)"/><rect x="117.0" y="447.0" width="7.8" height="1.7" fill="rgba(70,70,70,0.62)"/><rect x="125.8" y="447.0" width="4.6" height="1.7" fill="rgba(70,70,70,0.43)"/><rect x="131.2" y="447.0" width="7.6" height="1.7" fill="rgba(70,70,70,0.33)"/><rect x="117.0" y="450.3" width="4.1" height="1.7" fill="rgba(70,70,70,0.33)"/><rect x="121.6" y="450.3" width="6.1" height="1.7" fill="rgba(70,70,70,0.44)"/><rect x="128.9" y="450.3" width="8.2" height="1.7" fill="rgba(70,70,70,0.71)"/><rect x="137.8" y="450.3" width="2.6" height="1.7" fill="rgba(70,70,70,0.34)"/><rect x="57.6" y="483.2" width="24.4" height="1.8" fill="#888"/><rect x="57.6" y="488.0" width="5.4" height="1.7" fill="rgba(70,70,70,0.40)"/><rect x="63.8" y="488.0" width="6.5" height="1.7" fill="rgba(70,70,70,0.58)"/><rect x="71.4" y="488.0" width="8.0" height="1.7" fill="rgba(70,70,70,0.58)"/><rect x="57.6" y="491.3" width="4.4" height="1.7" fill="rgba(70,70,70,0.54)"/><rect x="62.8" y="491.3" width="7.3" height="1.7" fill="rgba(70,70,70,0.38)"/><rect x="70.7" y="491.3" width="4.1" height="1.7" fill="rgba(70,70,70,0.36)"/><rect x="76.0" y="491.3" width="5.4" height="1.7" fill="rgba(70,70,70,0.44)"/><rect x="57.6" y="494.6" width="5.8" height="1.7" fill="rgba(70,70,70,0.40)"/><rect x="64.5" y="494.6" width="6.7" height="1.7" fill="rgba(70,70,70,0.72)"/><rect x="71.8" y="494.6" width="5.6" height="1.7" fill="rgba(70,70,70,0.64)"/><rect x="78.5" y="494.6" width="4.5" height="1.7" fill="rgba(70,70,70,0.32)"/><rect x="57.6" y="497.9" width="3.7" height="1.7" fill="rgba(70,70,70,0.71)"/><rect x="62.2" y="497.9" width="8.5" height="1.7" fill="rgba(70,70,70,0.46)"/><rect x="71.9" y="497.9" width="2.2" height="1.7" fill="rgba(70,70,70,0.41)"/><rect x="57.6" y="501.2" width="3.2" height="1.7" fill="rgba(70,70,70,0.55)"/><rect x="61.7" y="501.2" width="3.9" height="1.7" fill="rgba(70,70,70,0.45)"/><rect x="66.2" y="501.2" width="3.8" height="1.7" fill="rgba(70,70,70,0.41)"/><rect x="71.0" y="501.2" width="6.7" height="1.7" fill="rgba(70,70,70,0.39)"/><rect x="78.2" y="501.2" width="4.2" height="1.7" fill="rgba(70,70,70,0.58)"/><rect x="57.6" y="504.5" width="3.8" height="1.7" fill="rgba(70,70,70,0.63)"/><rect x="62.3" y="504.5" width="2.9" height="1.7" fill="rgba(70,70,70,0.34)"/><rect x="66.0" y="504.5" width="6.1" height="1.7" fill="rgba(70,70,70,0.57)"/><rect x="72.6" y="504.5" width="3.4" height="1.7" fill="rgba(70,70,70,0.59)"/><rect x="57.6" y="507.8" width="4.5" height="1.7" fill="rgba(70,70,70,0.70)"/><rect x="62.8" y="507.8" width="6.2" height="1.7" fill="rgba(70,70,70,0.45)"/><rect x="69.8" y="507.8" width="5.9" height="1.7" fill="rgba(70,70,70,0.72)"/><rect x="57.6" y="511.1" width="7.2" height="1.7" fill="rgba(70,70,70,0.39)"/><rect x="65.3" y="511.1" width="8.4" height="1.7" fill="rgba(70,70,70,0.48)"/><rect x="57.6" y="514.4" width="8.2" height="1.7" fill="rgba(70,70,70,0.49)"/><rect x="66.5" y="514.4" width="2.6" height="1.7" fill="rgba(70,70,70,0.53)"/><rect x="70.0" y="514.4" width="7.0" height="1.7" fill="rgba(70,70,70,0.34)"/><rect x="57.6" y="517.7" width="5.8" height="1.7" fill="rgba(70,70,70,0.36)"/><rect x="64.1" y="517.7" width="5.9" height="1.7" fill="rgba(70,70,70,0.69)"/><rect x="70.5" y="517.7" width="5.7" height="1.7" fill="rgba(70,70,70,0.64)"/><rect x="87.5" y="488.0" width="3.3" height="1.7" fill="rgba(70,70,70,0.70)"/><rect x="92.0" y="488.0" width="5.6" height="1.7" fill="rgba(70,70,70,0.32)"/><rect x="98.8" y="488.0" width="5.0" height="1.7" fill="rgba(70,70,70,0.68)"/><rect x="87.5" y="491.3" width="3.5" height="1.7" fill="rgba(70,70,70,0.63)"/><rect x="91.7" y="491.3" width="5.1" height="1.7" fill="rgba(70,70,70,0.66)"/><rect x="97.9" y="491.3" width="3.7" height="1.7" fill="rgba(70,70,70,0.39)"/><rect x="102.4" y="491.3" width="5.9" height="1.7" fill="rgba(70,70,70,0.46)"/><rect x="108.8" y="491.3" width="3.3" height="1.7" fill="rgba(70,70,70,0.60)"/><rect x="87.5" y="494.6" width="6.2" height="1.7" fill="rgba(70,70,70,0.62)"/><rect x="94.2" y="494.6" width="7.9" height="1.7" fill="rgba(70,70,70,0.35)"/><rect x="87.5" y="497.9" width="6.6" height="1.7" fill="rgba(70,70,70,0.43)"/><rect x="94.9" y="497.9" width="6.3" height="1.7" fill="rgba(70,70,70,0.48)"/><rect x="102.1" y="497.9" width="5.4" height="1.7" fill="rgba(70,70,70,0.48)"/><rect x="108.0" y="497.9" width="1.2" height="1.7" fill="rgba(70,70,70,0.51)"/><rect x="87.5" y="501.2" width="7.6" height="1.7" fill="rgba(70,70,70,0.49)"/><rect x="95.7" y="501.2" width="5.6" height="1.7" fill="rgba(70,70,70,0.34)"/><rect x="101.9" y="501.2" width="5.3" height="1.7" fill="rgba(70,70,70,0.34)"/><rect x="108.0" y="501.2" width="3.5" height="1.7" fill="rgba(70,70,70,0.32)"/><rect x="87.5" y="504.5" width="7.3" height="1.7" fill="rgba(70,70,70,0.63)"/><rect x="95.6" y="504.5" width="2.9" height="1.7" fill="rgba(70,70,70,0.51)"/><rect x="99.2" y="504.5" width="5.0" height="1.7" fill="rgba(70,70,70,0.36)"/><rect x="87.5" y="507.8" width="7.3" height="1.7" fill="rgba(70,70,70,0.64)"/><rect x="95.4" y="507.8" width="8.9" height="1.7" fill="rgba(70,70,70,0.51)"/><rect x="105.4" y="507.8" width="8.5" height="1.7" fill="rgba(70,70,70,0.37)"/><rect x="87.5" y="511.1" width="2.9" height="1.7" fill="rgba(70,70,70,0.45)"/><rect x="91.5" y="511.1" width="3.5" height="1.7" fill="rgba(70,70,70,0.68)"/><rect x="95.7" y="511.1" width="7.8" height="1.7" fill="rgba(70,70,70,0.36)"/><rect x="104.3" y="511.1" width="8.5" height="1.7" fill="rgba(70,70,70,0.39)"/><rect x="117.0" y="489.0" width="8.5" height="5.5" fill="#2e86a8"/><rect x="125.3" y="489.0" width="8.5" height="5.5" fill="#d46a4e"/><rect x="133.7" y="489.0" width="8.5" height="5.5" fill="#2e86a8"/><rect x="117.0" y="494.2" width="8.5" height="5.5" fill="#5aa7b8"/><rect x="125.3" y="494.2" width="8.5" height="5.5" fill="#e8b090"/><rect x="133.7" y="494.2" width="8.5" height="5.5" fill="#5aa7b8"/><rect x="117.0" y="501.5" width="25.0" height="1.4" fill="#7fa3a3"/></svg>
<span class="t" style="left:64px;width:40px;text-align:center;top:540.2px;font-size:14px;line-height:15px;font-weight:bold;color:#333">2</span>
<svg class="r" style="left:14px;top:569.6px" width="143" height="182" viewBox="14 569.6 143 182"><rect x="14.5" y="571.1" width="141" height="179.6" fill="#fff" stroke="#aab4c0" stroke-width="1"/><rect x="25.0" y="583.6" width="14.0" height="1.4" fill="#888"/><rect x="107.0" y="583.6" width="6.9" height="1.4" fill="#888"/><rect x="25.0" y="586.0" width="88.9" height="1.6" fill="#7fa3a3"/><rect x="25.0" y="594.8" width="25.6" height="1.8" fill="#888"/><rect x="25.0" y="600.5" width="4.6" height="1.7" fill="rgba(70,70,70,0.32)"/><rect x="30.2" y="600.5" width="3.5" height="1.7" fill="rgba(70,70,70,0.69)"/><rect x="34.7" y="600.5" width="8.3" height="1.7" fill="rgba(70,70,70,0.37)"/><rect x="44.1" y="600.5" width="3.1" height="1.7" fill="rgba(70,70,70,0.52)"/><rect x="25.0" y="603.8" width="8.2" height="1.7" fill="rgba(70,70,70,0.53)"/><rect x="34.1" y="603.8" width="8.2" height="1.7" fill="rgba(70,70,70,0.34)"/><rect x="43.5" y="603.8" width="2.1" height="1.7" fill="rgba(70,70,70,0.47)"/><rect x="25.0" y="607.1" width="8.9" height="1.7" fill="rgba(70,70,70,0.54)"/><rect x="34.7" y="607.1" width="7.5" height="1.7" fill="rgba(70,70,70,0.49)"/><rect x="42.8" y="607.1" width="1.8" height="1.7" fill="rgba(70,70,70,0.32)"/><rect x="25.0" y="610.4" width="6.7" height="1.7" fill="rgba(70,70,70,0.71)"/><rect x="32.6" y="610.4" width="6.8" height="1.7" fill="rgba(70,70,70,0.43)"/><rect x="39.9" y="610.4" width="2.7" height="1.7" fill="rgba(70,70,70,0.36)"/><rect x="25.0" y="613.7" width="5.8" height="1.7" fill="rgba(70,70,70,0.68)"/><rect x="31.4" y="613.7" width="4.0" height="1.7" fill="rgba(70,70,70,0.57)"/><rect x="35.9" y="613.7" width="2.5" height="1.7" fill="rgba(70,70,70,0.45)"/><rect x="39.0" y="613.7" width="4.8" height="1.7" fill="rgba(70,70,70,0.39)"/><rect x="44.7" y="613.7" width="1.7" height="1.7" fill="rgba(70,70,70,0.39)"/><rect x="25.0" y="617.0" width="3.4" height="1.7" fill="rgba(70,70,70,0.69)"/><rect x="29.0" y="617.0" width="3.5" height="1.7" fill="rgba(70,70,70,0.34)"/><rect x="33.5" y="617.0" width="8.2" height="1.7" fill="rgba(70,70,70,0.63)"/><rect x="42.4" y="617.0" width="4.2" height="1.7" fill="rgba(70,70,70,0.30)"/><rect x="25.0" y="620.3" width="4.8" height="1.7" fill="rgba(70,70,70,0.57)"/><rect x="30.6" y="620.3" width="8.6" height="1.7" fill="rgba(70,70,70,0.61)"/><rect x="39.9" y="620.3" width="8.0" height="1.7" fill="rgba(70,70,70,0.32)"/><rect x="25.0" y="623.6" width="4.0" height="1.7" fill="rgba(70,70,70,0.32)"/><rect x="30.1" y="623.6" width="2.6" height="1.7" fill="rgba(70,70,70,0.53)"/><rect x="33.8" y="623.6" width="3.4" height="1.7" fill="rgba(70,70,70,0.38)"/><rect x="38.2" y="623.6" width="5.8" height="1.7" fill="rgba(70,70,70,0.57)"/><rect x="45.0" y="623.6" width="1.1" height="1.7" fill="rgba(70,70,70,0.43)"/><rect x="25.0" y="626.9" width="8.3" height="1.7" fill="rgba(70,70,70,0.63)"/><rect x="34.3" y="626.9" width="2.5" height="1.7" fill="rgba(70,70,70,0.65)"/><rect x="37.8" y="626.9" width="4.3" height="1.7" fill="rgba(70,70,70,0.61)"/><rect x="25.0" y="630.2" width="3.2" height="1.7" fill="rgba(70,70,70,0.40)"/><rect x="28.7" y="630.2" width="4.7" height="1.7" fill="rgba(70,70,70,0.61)"/><rect x="34.4" y="630.2" width="8.0" height="1.7" fill="rgba(70,70,70,0.60)"/><rect x="43.1" y="630.2" width="1.1" height="1.7" fill="rgba(70,70,70,0.48)"/><rect x="25.0" y="633.5" width="4.2" height="1.7" fill="rgba(70,70,70,0.57)"/><rect x="30.4" y="633.5" width="3.9" height="1.7" fill="rgba(70,70,70,0.67)"/><rect x="34.8" y="633.5" width="4.2" height="1.7" fill="rgba(70,70,70,0.40)"/><rect x="40.0" y="633.5" width="7.4" height="1.7" fill="rgba(70,70,70,0.61)"/><rect x="25.0" y="636.8" width="4.6" height="1.7" fill="rgba(70,70,70,0.40)"/><rect x="30.8" y="636.8" width="6.6" height="1.7" fill="rgba(70,70,70,0.59)"/><rect x="38.3" y="636.8" width="8.9" height="1.7" fill="rgba(70,70,70,0.50)"/><rect x="48.3" y="636.8" width="3.1" height="1.7" fill="rgba(70,70,70,0.66)"/><rect x="25.0" y="640.1" width="6.2" height="1.7" fill="rgba(70,70,70,0.43)"/><rect x="31.9" y="640.1" width="6.5" height="1.7" fill="rgba(70,70,70,0.33)"/><rect x="39.5" y="640.1" width="3.4" height="1.7" fill="rgba(70,70,70,0.31)"/><rect x="43.6" y="640.1" width="6.1" height="1.7" fill="rgba(70,70,70,0.44)"/><rect x="25.0" y="643.4" width="2.8" height="1.7" fill="rgba(70,70,70,0.59)"/><rect x="28.7" y="643.4" width="7.0" height="1.7" fill="rgba(70,70,70,0.61)"/><rect x="36.3" y="643.4" width="5.6" height="1.7" fill="rgba(70,70,70,0.45)"/><rect x="55.7" y="600.5" width="8.3" height="1.7" fill="rgba(70,70,70,0.33)"/><rect x="65.1" y="600.5" width="6.0" height="1.7" fill="rgba(70,70,70,0.70)"/><rect x="55.7" y="603.8" width="3.2" height="1.7" fill="rgba(70,70,70,0.31)"/><rect x="60.0" y="603.8" width="7.0" height="1.7" fill="rgba(70,70,70,0.57)"/><rect x="55.7" y="607.1" width="4.4" height="1.7" fill="rgba(70,70,70,0.34)"/><rect x="60.6" y="607.1" width="7.4" height="1.7" fill="rgba(70,70,70,0.39)"/><rect x="68.8" y="607.1" width="1.1" height="1.7" fill="rgba(70,70,70,0.31)"/><rect x="55.7" y="610.4" width="7.2" height="1.7" fill="rgba(70,70,70,0.45)"/><rect x="63.6" y="610.4" width="4.0" height="1.7" fill="rgba(70,70,70,0.51)"/><rect x="55.7" y="613.7" width="2.7" height="1.7" fill="rgba(70,70,70,0.47)"/><rect x="59.2" y="613.7" width="7.5" height="1.7" fill="rgba(70,70,70,0.45)"/><rect x="67.7" y="613.7" width="2.0" height="1.7" fill="rgba(70,70,70,0.39)"/><rect x="55.7" y="617.0" width="7.8" height="1.7" fill="rgba(70,70,70,0.37)"/><rect x="64.0" y="617.0" width="2.2" height="1.7" fill="rgba(70,70,70,0.62)"/><rect x="55.7" y="620.3" width="5.7" height="1.7" fill="rgba(70,70,70,0.51)"/><rect x="62.4" y="620.3" width="3.2" height="1.7" fill="rgba(70,70,70,0.51)"/><rect x="55.7" y="623.6" width="4.2" height="1.7" fill="rgba(70,70,70,0.70)"/><rect x="60.6" y="623.6" width="3.9" height="1.7" fill="rgba(70,70,70,0.59)"/><rect x="65.3" y="623.6" width="3.2" height="1.7" fill="rgba(70,70,70,0.57)"/><rect x="69.1" y="623.6" width="2.1" height="1.7" fill="rgba(70,70,70,0.59)"/><rect x="55.7" y="626.9" width="4.8" height="1.7" fill="rgba(70,70,70,0.47)"/><rect x="61.3" y="626.9" width="8.3" height="1.7" fill="rgba(70,70,70,0.34)"/><rect x="55.7" y="630.2" width="3.8" height="1.7" fill="rgba(70,70,70,0.41)"/><rect x="60.7" y="630.2" width="5.2" height="1.7" fill="rgba(70,70,70,0.46)"/><rect x="55.7" y="633.5" width="5.5" height="1.7" fill="rgba(70,70,70,0.52)"/><rect x="62.2" y="633.5" width="5.0" height="1.7" fill="rgba(70,70,70,0.57)"/><rect x="55.7" y="636.8" width="3.5" height="1.7" fill="rgba(70,70,70,0.65)"/><rect x="60.2" y="636.8" width="7.3" height="1.7" fill="rgba(70,70,70,0.37)"/><rect x="55.7" y="640.1" width="6.3" height="1.7" fill="rgba(70,70,70,0.35)"/><rect x="62.8" y="640.1" width="8.0" height="1.7" fill="rgba(70,70,70,0.40)"/><rect x="55.7" y="643.4" width="7.1" height="1.7" fill="rgba(70,70,70,0.65)"/><rect x="63.4" y="643.4" width="3.5" height="1.7" fill="rgba(70,70,70,0.40)"/><rect x="73.2" y="600.5" width="5.6" height="5.5" fill="#3aa7a7"/><rect x="78.6" y="600.5" width="5.6" height="5.5" fill="#f3f3e6"/><rect x="84.1" y="600.5" width="5.6" height="5.5" fill="#7fc4c4"/><rect x="73.2" y="605.8" width="5.6" height="5.5" fill="#8fd0c0"/><rect x="78.6" y="605.8" width="5.6" height="5.5" fill="#f0b070"/><rect x="84.1" y="605.8" width="5.6" height="5.5" fill="#e8c98a"/><rect x="73.2" y="611.0" width="5.6" height="5.5" fill="#6a9a94"/><rect x="78.6" y="611.0" width="5.6" height="5.5" fill="#3aa7a7"/><rect x="84.1" y="611.0" width="5.6" height="5.5" fill="#f3f3e6"/><rect x="73.2" y="616.2" width="5.6" height="5.5" fill="#7fc4c4"/><rect x="78.6" y="616.2" width="5.6" height="5.5" fill="#8fd0c0"/><rect x="84.1" y="616.2" width="5.6" height="5.5" fill="#f0b070"/><rect x="73.2" y="621.5" width="5.6" height="5.5" fill="#e8c98a"/><rect x="78.6" y="621.5" width="5.6" height="5.5" fill="#6a9a94"/><rect x="84.1" y="621.5" width="5.6" height="5.5" fill="#3aa7a7"/><rect x="73.2" y="626.8" width="5.6" height="5.5" fill="#f3f3e6"/><rect x="78.6" y="626.8" width="5.6" height="5.5" fill="#7fc4c4"/><rect x="84.1" y="626.8" width="5.6" height="5.5" fill="#8fd0c0"/><rect x="73.2" y="633.5" width="13.8" height="2.6" fill="#7fa3a3"/><rect x="90.4" y="600.5" width="3.5" height="1.7" fill="rgba(70,70,70,0.44)"/><rect x="94.6" y="600.5" width="8.8" height="1.7" fill="rgba(70,70,70,0.61)"/><rect x="104.0" y="600.5" width="5.4" height="1.7" fill="rgba(70,70,70,0.34)"/><rect x="90.4" y="603.8" width="7.7" height="1.7" fill="rgba(70,70,70,0.61)"/><rect x="98.9" y="603.8" width="3.8" height="1.7" fill="rgba(70,70,70,0.57)"/><rect x="103.2" y="603.8" width="3.8" height="1.7" fill="rgba(70,70,70,0.46)"/><rect x="107.6" y="603.8" width="5.1" height="1.7" fill="rgba(70,70,70,0.63)"/><rect x="90.4" y="607.1" width="6.6" height="1.7" fill="rgba(70,70,70,0.49)"/><rect x="97.6" y="607.1" width="6.4" height="1.7" fill="rgba(70,70,70,0.47)"/><rect x="105.1" y="607.1" width="4.2" height="1.7" fill="rgba(70,70,70,0.48)"/><rect x="90.4" y="610.4" width="5.2" height="1.7" fill="rgba(70,70,70,0.40)"/><rect x="96.6" y="610.4" width="8.2" height="1.7" fill="rgba(70,70,70,0.63)"/><rect x="105.9" y="610.4" width="5.7" height="1.7" fill="rgba(70,70,70,0.59)"/><rect x="90.4" y="613.7" width="4.5" height="1.7" fill="rgba(70,70,70,0.56)"/><rect x="95.5" y="613.7" width="5.2" height="1.7" fill="rgba(70,70,70,0.63)"/><rect x="101.7" y="613.7" width="6.6" height="1.7" fill="rgba(70,70,70,0.41)"/><rect x="90.4" y="617.0" width="6.5" height="1.7" fill="rgba(70,70,70,0.47)"/><rect x="97.9" y="617.0" width="8.5" height="1.7" fill="rgba(70,70,70,0.38)"/><rect x="107.4" y="617.0" width="1.4" height="1.7" fill="rgba(70,70,70,0.46)"/><rect x="90.4" y="620.3" width="2.7" height="1.7" fill="rgba(70,70,70,0.53)"/><rect x="93.8" y="620.3" width="7.6" height="1.7" fill="rgba(70,70,70,0.70)"/><rect x="102.2" y="620.3" width="3.2" height="1.7" fill="rgba(70,70,70,0.54)"/><rect x="106.2" y="620.3" width="7.2" height="1.7" fill="rgba(70,70,70,0.52)"/><rect x="121.4" y="645.7" width="19.3" height="2.4" fill="#7fa3a3"/><rect x="121.4" y="683.3" width="19.3" height="2.4" fill="#7fa3a3"/><rect x="122.0" y="651.0" width="12.0" height="1.2" fill="#999"/><rect x="122.0" y="656.0" width="7.0" height="1.2" fill="#999"/><rect x="122.0" y="661.0" width="15.0" height="1.2" fill="#999"/><rect x="122.0" y="666.0" width="11.0" height="1.2" fill="#999"/><rect x="122.0" y="671.0" width="13.0" height="1.2" fill="#999"/><rect x="122.0" y="676.0" width="10.0" height="1.2" fill="#999"/><rect x="25.0" y="653.4" width="25.6" height="1.8" fill="#888"/><rect x="25.0" y="658.0" width="5.9" height="1.7" fill="rgba(70,70,70,0.47)"/><rect x="32.1" y="658.0" width="3.9" height="1.7" fill="rgba(70,70,70,0.59)"/><rect x="36.7" y="658.0" width="7.5" height="1.7" fill="rgba(70,70,70,0.35)"/><rect x="45.3" y="658.0" width="4.8" height="1.7" fill="rgba(70,70,70,0.32)"/><rect x="25.0" y="661.3" width="2.6" height="1.7" fill="rgba(70,70,70,0.48)"/><rect x="28.4" y="661.3" width="7.0" height="1.7" fill="rgba(70,70,70,0.45)"/><rect x="36.1" y="661.3" width="4.0" height="1.7" fill="rgba(70,70,70,0.61)"/><rect x="41.2" y="661.3" width="4.8" height="1.7" fill="rgba(70,70,70,0.39)"/><rect x="25.0" y="664.6" width="3.9" height="1.7" fill="rgba(70,70,70,0.35)"/><rect x="29.9" y="664.6" width="7.8" height="1.7" fill="rgba(70,70,70,0.57)"/><rect x="38.5" y="664.6" width="6.2" height="1.7" fill="rgba(70,70,70,0.39)"/><rect x="25.0" y="667.9" width="6.7" height="1.7" fill="rgba(70,70,70,0.64)"/><rect x="32.7" y="667.9" width="5.5" height="1.7" fill="rgba(70,70,70,0.42)"/><rect x="39.1" y="667.9" width="3.3" height="1.7" fill="rgba(70,70,70,0.65)"/><rect x="43.2" y="667.9" width="2.3" height="1.7" fill="rgba(70,70,70,0.41)"/><rect x="25.0" y="671.2" width="5.3" height="1.7" fill="rgba(70,70,70,0.38)"/><rect x="30.8" y="671.2" width="7.2" height="1.7" fill="rgba(70,70,70,0.42)"/><rect x="38.6" y="671.2" width="4.5" height="1.7" fill="rgba(70,70,70,0.50)"/><rect x="25.0" y="674.5" width="6.8" height="1.7" fill="rgba(70,70,70,0.45)"/><rect x="32.9" y="674.5" width="8.1" height="1.7" fill="rgba(70,70,70,0.32)"/><rect x="42.1" y="674.5" width="6.6" height="1.7" fill="rgba(70,70,70,0.63)"/><rect x="25.0" y="677.8" width="6.6" height="1.7" fill="rgba(70,70,70,0.31)"/><rect x="32.1" y="677.8" width="8.7" height="1.7" fill="rgba(70,70,70,0.58)"/><rect x="41.5" y="677.8" width="3.2" height="1.7" fill="rgba(70,70,70,0.36)"/><rect x="45.3" y="677.8" width="5.5" height="1.7" fill="rgba(70,70,70,0.45)"/><rect x="25.0" y="681.1" width="7.6" height="1.7" fill="rgba(70,70,70,0.37)"/><rect x="33.8" y="681.1" width="6.5" height="1.7" fill="rgba(70,70,70,0.63)"/><rect x="41.2" y="681.1" width="8.3" height="1.7" fill="rgba(70,70,70,0.63)"/><rect x="50.6" y="681.1" width="1.0" height="1.7" fill="rgba(70,70,70,0.59)"/><rect x="25.0" y="684.4" width="5.4" height="1.7" fill="rgba(70,70,70,0.67)"/><rect x="31.2" y="684.4" width="4.2" height="1.7" fill="rgba(70,70,70,0.40)"/><rect x="36.1" y="684.4" width="5.7" height="1.7" fill="rgba(70,70,70,0.32)"/><rect x="42.6" y="684.4" width="3.4" height="1.7" fill="rgba(70,70,70,0.51)"/><rect x="46.9" y="684.4" width="3.0" height="1.7" fill="rgba(70,70,70,0.66)"/><rect x="55.7" y="658.0" width="5.5" height="1.7" fill="rgba(70,70,70,0.54)"/><rect x="62.2" y="658.0" width="8.0" height="1.7" fill="rgba(70,70,70,0.46)"/><rect x="71.0" y="658.0" width="8.7" height="1.7" fill="rgba(70,70,70,0.33)"/><rect x="55.7" y="661.3" width="2.7" height="1.7" fill="rgba(70,70,70,0.56)"/><rect x="59.4" y="661.3" width="8.6" height="1.7" fill="rgba(70,70,70,0.44)"/><rect x="69.1" y="661.3" width="5.8" height="1.7" fill="rgba(70,70,70,0.50)"/><rect x="76.1" y="661.3" width="2.7" height="1.7" fill="rgba(70,70,70,0.60)"/><rect x="55.7" y="664.6" width="8.1" height="1.7" fill="rgba(70,70,70,0.45)"/><rect x="64.6" y="664.6" width="5.9" height="1.7" fill="rgba(70,70,70,0.62)"/><rect x="71.2" y="664.6" width="4.4" height="1.7" fill="rgba(70,70,70,0.48)"/><rect x="55.7" y="667.9" width="4.4" height="1.7" fill="rgba(70,70,70,0.65)"/><rect x="60.9" y="667.9" width="5.8" height="1.7" fill="rgba(70,70,70,0.41)"/><rect x="67.5" y="667.9" width="8.8" height="1.7" fill="rgba(70,70,70,0.57)"/><rect x="77.4" y="667.9" width="3.5" height="1.7" fill="rgba(70,70,70,0.43)"/><rect x="55.7" y="671.2" width="6.6" height="1.7" fill="rgba(70,70,70,0.63)"/><rect x="62.9" y="671.2" width="7.2" height="1.7" fill="rgba(70,70,70,0.67)"/><rect x="70.9" y="671.2" width="2.8" height="1.7" fill="rgba(70,70,70,0.43)"/><rect x="74.3" y="671.2" width="3.7" height="1.7" fill="rgba(70,70,70,0.69)"/><rect x="55.7" y="674.5" width="7.6" height="1.7" fill="rgba(70,70,70,0.68)"/><rect x="64.3" y="674.5" width="6.5" height="1.7" fill="rgba(70,70,70,0.56)"/><rect x="71.8" y="674.5" width="6.4" height="1.7" fill="rgba(70,70,70,0.59)"/><rect x="55.7" y="677.8" width="5.5" height="1.7" fill="rgba(70,70,70,0.62)"/><rect x="61.7" y="677.8" width="3.7" height="1.7" fill="rgba(70,70,70,0.32)"/><rect x="66.5" y="677.8" width="8.4" height="1.7" fill="rgba(70,70,70,0.58)"/><rect x="75.7" y="677.8" width="3.5" height="1.7" fill="rgba(70,70,70,0.63)"/><rect x="55.7" y="681.1" width="4.5" height="1.7" fill="rgba(70,70,70,0.48)"/><rect x="60.9" y="681.1" width="5.3" height="1.7" fill="rgba(70,70,70,0.57)"/><rect x="67.3" y="681.1" width="2.9" height="1.7" fill="rgba(70,70,70,0.54)"/><rect x="70.7" y="681.1" width="3.3" height="1.7" fill="rgba(70,70,70,0.64)"/><rect x="55.7" y="684.4" width="5.4" height="1.7" fill="rgba(70,70,70,0.31)"/><rect x="61.9" y="684.4" width="6.3" height="1.7" fill="rgba(70,70,70,0.69)"/><rect x="69.4" y="684.4" width="5.6" height="1.7" fill="rgba(70,70,70,0.47)"/><rect x="75.6" y="684.4" width="6.3" height="1.7" fill="rgba(70,70,70,0.39)"/><rect x="86.4" y="658.0" width="2.5" height="1.7" fill="rgba(70,70,70,0.59)"/><rect x="89.5" y="658.0" width="8.8" height="1.7" fill="rgba(70,70,70,0.34)"/><rect x="99.4" y="658.0" width="3.3" height="1.7" fill="rgba(70,70,70,0.31)"/><rect x="86.4" y="661.3" width="7.3" height="1.7" fill="rgba(70,70,70,0.38)"/><rect x="94.2" y="661.3" width="7.5" height="1.7" fill="rgba(70,70,70,0.60)"/><rect x="102.8" y="661.3" width="2.7" height="1.7" fill="rgba(70,70,70,0.34)"/><rect x="86.4" y="664.6" width="5.5" height="1.7" fill="rgba(70,70,70,0.69)"/><rect x="92.6" y="664.6" width="8.8" height="1.7" fill="rgba(70,70,70,0.60)"/><rect x="101.8" y="664.6" width="2.6" height="1.7" fill="rgba(70,70,70,0.57)"/><rect x="105.5" y="664.6" width="3.0" height="1.7" fill="rgba(70,70,70,0.43)"/><rect x="109.5" y="664.6" width="1.2" height="1.7" fill="rgba(70,70,70,0.66)"/><rect x="25.0" y="696.2" width="25.6" height="1.8" fill="#888"/><rect x="26.5" y="701.4" width="8.6" height="7.0" fill="#2e86a8"/><rect x="34.9" y="701.4" width="8.6" height="7.0" fill="#d46a4e"/><rect x="43.4" y="701.4" width="8.6" height="7.0" fill="#2e86a8"/><rect x="26.5" y="708.2" width="8.6" height="7.0" fill="#5aa7b8"/><rect x="34.9" y="708.2" width="8.6" height="7.0" fill="#e8b090"/><rect x="43.4" y="708.2" width="8.6" height="7.0" fill="#5aa7b8"/><rect x="26.5" y="718.7" width="25.3" height="1.6" fill="#7fa3a3"/><rect x="25.0" y="728.8" width="22.0" height="1.3" fill="#999"/><rect x="25.0" y="733.4" width="24.0" height="1.6" fill="#999"/><rect x="55.7" y="701.0" width="4.9" height="1.7" fill="rgba(70,70,70,0.54)"/><rect x="61.4" y="701.0" width="6.9" height="1.7" fill="rgba(70,70,70,0.36)"/><rect x="69.4" y="701.0" width="3.3" height="1.7" fill="rgba(70,70,70,0.57)"/><rect x="55.7" y="704.3" width="5.0" height="1.7" fill="rgba(70,70,70,0.63)"/><rect x="61.9" y="704.3" width="7.6" height="1.7" fill="rgba(70,70,70,0.54)"/><rect x="70.2" y="704.3" width="2.9" height="1.7" fill="rgba(70,70,70,0.71)"/><rect x="74.1" y="704.3" width="2.4" height="1.7" fill="rgba(70,70,70,0.44)"/><rect x="55.7" y="707.6" width="7.9" height="1.7" fill="rgba(70,70,70,0.55)"/><rect x="64.3" y="707.6" width="5.3" height="1.7" fill="rgba(70,70,70,0.67)"/><rect x="70.4" y="707.6" width="7.0" height="1.7" fill="rgba(70,70,70,0.55)"/><rect x="78.4" y="707.6" width="4.1" height="1.7" fill="rgba(70,70,70,0.42)"/><rect x="55.7" y="710.9" width="5.2" height="1.7" fill="rgba(70,70,70,0.55)"/><rect x="62.0" y="710.9" width="8.3" height="1.7" fill="rgba(70,70,70,0.32)"/><rect x="71.4" y="710.9" width="3.4" height="1.7" fill="rgba(70,70,70,0.66)"/><rect x="55.7" y="714.2" width="8.0" height="1.7" fill="rgba(70,70,70,0.64)"/><rect x="64.7" y="714.2" width="8.4" height="1.7" fill="rgba(70,70,70,0.45)"/><rect x="73.7" y="714.2" width="1.2" height="1.7" fill="rgba(70,70,70,0.63)"/><rect x="55.7" y="717.5" width="8.6" height="1.7" fill="rgba(70,70,70,0.40)"/><rect x="65.2" y="717.5" width="6.9" height="1.7" fill="rgba(70,70,70,0.50)"/><rect x="72.7" y="717.5" width="4.2" height="1.7" fill="rgba(70,70,70,0.62)"/><rect x="77.9" y="717.5" width="2.2" height="1.7" fill="rgba(70,70,70,0.34)"/><rect x="55.7" y="720.8" width="4.0" height="1.7" fill="rgba(70,70,70,0.54)"/><rect x="60.8" y="720.8" width="8.3" height="1.7" fill="rgba(70,70,70,0.52)"/><rect x="69.9" y="720.8" width="6.3" height="1.7" fill="rgba(70,70,70,0.38)"/><rect x="76.9" y="720.8" width="3.4" height="1.7" fill="rgba(70,70,70,0.59)"/><rect x="55.7" y="724.1" width="5.1" height="1.7" fill="rgba(70,70,70,0.52)"/><rect x="61.4" y="724.1" width="2.8" height="1.7" fill="rgba(70,70,70,0.72)"/><rect x="65.0" y="724.1" width="3.2" height="1.7" fill="rgba(70,70,70,0.57)"/><rect x="69.2" y="724.1" width="3.5" height="1.7" fill="rgba(70,70,70,0.55)"/><rect x="73.5" y="724.1" width="4.6" height="1.7" fill="rgba(70,70,70,0.31)"/><rect x="55.7" y="727.4" width="8.1" height="1.7" fill="rgba(70,70,70,0.50)"/><rect x="64.7" y="727.4" width="4.2" height="1.7" fill="rgba(70,70,70,0.63)"/><rect x="69.7" y="727.4" width="8.7" height="1.7" fill="rgba(70,70,70,0.62)"/><rect x="79.5" y="727.4" width="3.2" height="1.7" fill="rgba(70,70,70,0.41)"/><rect x="55.7" y="730.7" width="3.7" height="1.7" fill="rgba(70,70,70,0.34)"/><rect x="59.9" y="730.7" width="6.1" height="1.7" fill="rgba(70,70,70,0.67)"/><rect x="66.9" y="730.7" width="7.3" height="1.7" fill="rgba(70,70,70,0.68)"/><rect x="55.7" y="734.0" width="5.1" height="1.7" fill="rgba(70,70,70,0.35)"/><rect x="62.0" y="734.0" width="4.2" height="1.7" fill="rgba(70,70,70,0.54)"/><rect x="67.1" y="734.0" width="8.7" height="1.7" fill="rgba(70,70,70,0.58)"/><rect x="76.6" y="734.0" width="1.9" height="1.7" fill="rgba(70,70,70,0.37)"/><rect x="86.4" y="701.0" width="3.9" height="1.7" fill="rgba(70,70,70,0.32)"/><rect x="91.0" y="701.0" width="4.8" height="1.7" fill="rgba(70,70,70,0.68)"/><rect x="96.9" y="701.0" width="7.9" height="1.7" fill="rgba(70,70,70,0.32)"/><rect x="105.9" y="701.0" width="7.1" height="1.7" fill="rgba(70,70,70,0.57)"/><rect x="86.4" y="704.3" width="3.4" height="1.7" fill="rgba(70,70,70,0.62)"/><rect x="91.0" y="704.3" width="6.9" height="1.7" fill="rgba(70,70,70,0.43)"/><rect x="98.8" y="704.3" width="4.7" height="1.7" fill="rgba(70,70,70,0.34)"/><rect x="86.4" y="707.6" width="3.3" height="1.7" fill="rgba(70,70,70,0.50)"/><rect x="90.3" y="707.6" width="4.0" height="1.7" fill="rgba(70,70,70,0.36)"/><rect x="95.3" y="707.6" width="2.6" height="1.7" fill="rgba(70,70,70,0.60)"/><rect x="98.6" y="707.6" width="2.7" height="1.7" fill="rgba(70,70,70,0.69)"/><rect x="102.0" y="707.6" width="3.8" height="1.7" fill="rgba(70,70,70,0.66)"/><rect x="86.4" y="710.9" width="5.4" height="1.7" fill="rgba(70,70,70,0.34)"/><rect x="93.0" y="710.9" width="8.0" height="1.7" fill="rgba(70,70,70,0.56)"/><rect x="101.7" y="710.9" width="2.7" height="1.7" fill="rgba(70,70,70,0.65)"/><rect x="86.4" y="714.2" width="3.4" height="1.7" fill="rgba(70,70,70,0.39)"/><rect x="90.4" y="714.2" width="7.1" height="1.7" fill="rgba(70,70,70,0.53)"/><rect x="98.1" y="714.2" width="8.2" height="1.7" fill="rgba(70,70,70,0.41)"/><rect x="107.1" y="714.2" width="2.8" height="1.7" fill="rgba(70,70,70,0.41)"/><rect x="86.4" y="717.5" width="3.6" height="1.7" fill="rgba(70,70,70,0.51)"/><rect x="90.7" y="717.5" width="8.4" height="1.7" fill="rgba(70,70,70,0.35)"/><rect x="100.3" y="717.5" width="2.9" height="1.7" fill="rgba(70,70,70,0.68)"/><rect x="104.1" y="717.5" width="2.5" height="1.7" fill="rgba(70,70,70,0.50)"/></svg>
<span class="t" style="left:64px;width:40px;text-align:center;top:753.5px;font-size:14px;line-height:15px;font-weight:bold;color:#333">3</span>
<svg class="r" style="left:14px;top:783.2px" width="143" height="182" viewBox="14 783.2 143 182"><rect x="14.5" y="784.7" width="141" height="179.6" fill="#fff" stroke="#aab4c0" stroke-width="1"/><rect x="27.0" y="794.0" width="117.7" height="3" fill="#6f9494"/><rect x="27.0" y="802.4" width="18.0" height="1.8" fill="#aaa"/><rect x="27.0" y="811.6" width="13.0" height="1.2" fill="#888"/><rect x="27.0" y="818.8" width="14.0" height="1.2" fill="#888"/><rect x="27.0" y="822.0" width="8.0" height="1.2" fill="#888"/><rect x="27.0" y="825.6" width="8.0" height="1.2" fill="#888"/><rect x="27.0" y="829.2" width="14.0" height="1.2" fill="#888"/><rect x="27.0" y="832.8" width="18.0" height="1.2" fill="#888"/><rect x="27.0" y="840.4" width="20.6" height="1.8" fill="#7fa3a3"/><rect x="57.0" y="816.4" width="3.8" height="1.5" fill="rgba(70,70,70,0.45)"/><rect x="62.0" y="816.4" width="9.0" height="1.5" fill="rgba(70,70,70,0.69)"/><rect x="71.6" y="816.4" width="4.4" height="1.5" fill="rgba(70,70,70,0.68)"/><rect x="76.5" y="816.4" width="7.2" height="1.5" fill="rgba(70,70,70,0.42)"/><rect x="84.9" y="816.4" width="2.6" height="1.5" fill="rgba(70,70,70,0.64)"/><rect x="88.2" y="816.4" width="3.4" height="1.5" fill="rgba(70,70,70,0.30)"/><rect x="92.7" y="816.4" width="5.9" height="1.5" fill="rgba(70,70,70,0.38)"/><rect x="99.5" y="816.4" width="8.4" height="1.5" fill="rgba(70,70,70,0.39)"/><rect x="108.8" y="816.4" width="3.4" height="1.5" fill="rgba(70,70,70,0.38)"/><rect x="113.2" y="816.4" width="7.1" height="1.5" fill="rgba(70,70,70,0.38)"/><rect x="120.9" y="816.4" width="3.1" height="1.5" fill="rgba(70,70,70,0.56)"/><rect x="124.8" y="816.4" width="4.3" height="1.5" fill="rgba(70,70,70,0.39)"/><rect x="130.0" y="816.4" width="2.7" height="1.5" fill="rgba(70,70,70,0.64)"/><rect x="57.0" y="821.0" width="2.9" height="1.5" fill="rgba(70,70,70,0.61)"/><rect x="60.7" y="821.0" width="7.2" height="1.5" fill="rgba(70,70,70,0.32)"/><rect x="69.0" y="821.0" width="4.7" height="1.5" fill="rgba(70,70,70,0.65)"/><rect x="74.8" y="821.0" width="5.7" height="1.5" fill="rgba(70,70,70,0.31)"/><rect x="81.6" y="821.0" width="5.6" height="1.5" fill="rgba(70,70,70,0.67)"/><rect x="87.9" y="821.0" width="3.7" height="1.5" fill="rgba(70,70,70,0.65)"/><rect x="92.3" y="821.0" width="3.6" height="1.5" fill="rgba(70,70,70,0.46)"/><rect x="96.8" y="821.0" width="2.5" height="1.5" fill="rgba(70,70,70,0.52)"/><rect x="100.2" y="821.0" width="5.9" height="1.5" fill="rgba(70,70,70,0.35)"/><rect x="107.0" y="821.0" width="7.8" height="1.5" fill="rgba(70,70,70,0.66)"/><rect x="115.6" y="821.0" width="7.1" height="1.5" fill="rgba(70,70,70,0.46)"/><rect x="123.7" y="821.0" width="2.9" height="1.5" fill="rgba(70,70,70,0.67)"/><rect x="127.8" y="821.0" width="4.2" height="1.5" fill="rgba(70,70,70,0.52)"/><rect x="57.0" y="825.6" width="2.6" height="1.5" fill="rgba(70,70,70,0.71)"/><rect x="60.3" y="825.6" width="3.7" height="1.5" fill="rgba(70,70,70,0.34)"/><rect x="64.7" y="825.6" width="7.8" height="1.5" fill="rgba(70,70,70,0.31)"/><rect x="73.0" y="825.6" width="7.0" height="1.5" fill="rgba(70,70,70,0.38)"/><rect x="80.6" y="825.6" width="6.4" height="1.5" fill="rgba(70,70,70,0.54)"/><rect x="87.8" y="825.6" width="7.1" height="1.5" fill="rgba(70,70,70,0.34)"/><rect x="96.0" y="825.6" width="7.2" height="1.5" fill="rgba(70,70,70,0.32)"/><rect x="103.8" y="825.6" width="5.7" height="1.5" fill="rgba(70,70,70,0.51)"/><rect x="110.2" y="825.6" width="3.3" height="1.5" fill="rgba(70,70,70,0.47)"/><rect x="114.1" y="825.6" width="6.3" height="1.5" fill="rgba(70,70,70,0.66)"/><rect x="121.0" y="825.6" width="6.2" height="1.5" fill="rgba(70,70,70,0.61)"/><rect x="127.9" y="825.6" width="7.9" height="1.5" fill="rgba(70,70,70,0.69)"/><rect x="57.0" y="830.2" width="8.0" height="1.5" fill="rgba(70,70,70,0.52)"/><rect x="65.7" y="830.2" width="8.6" height="1.5" fill="rgba(70,70,70,0.63)"/><rect x="75.1" y="830.2" width="4.1" height="1.5" fill="rgba(70,70,70,0.44)"/><rect x="80.0" y="830.2" width="8.9" height="1.5" fill="rgba(70,70,70,0.64)"/><rect x="90.0" y="830.2" width="7.8" height="1.5" fill="rgba(70,70,70,0.66)"/><rect x="98.3" y="830.2" width="5.9" height="1.5" fill="rgba(70,70,70,0.70)"/><rect x="105.3" y="830.2" width="4.1" height="1.5" fill="rgba(70,70,70,0.48)"/><rect x="110.4" y="830.2" width="4.9" height="1.5" fill="rgba(70,70,70,0.52)"/><rect x="115.8" y="830.2" width="5.3" height="1.5" fill="rgba(70,70,70,0.51)"/><rect x="121.6" y="830.2" width="3.4" height="1.5" fill="rgba(70,70,70,0.71)"/><rect x="126.1" y="830.2" width="8.6" height="1.5" fill="rgba(70,70,70,0.57)"/><rect x="57.0" y="836.4" width="85.0" height="1.4" fill="#aaa"/><rect x="27.5" y="856.8" width="20.8" height="12.6" fill="#fff" stroke="#bbb" stroke-width="0.8"/><rect x="27.0" y="856.2" width="1.6" height="13.6" fill="#555"/><rect x="46.8" y="856.2" width="1.6" height="13.6" fill="#aaa"/><rect x="30.0" y="860.0" width="14.0" height="1.2" fill="#bbb"/><rect x="30.0" y="864.4" width="10.0" height="1.2" fill="#bbb"/><rect x="57.0" y="879.4" width="31.6" height="1.8" fill="#888"/><rect x="57.8" y="886.0" width="8.3" height="1.7" fill="rgba(70,70,70,0.31)"/><rect x="67.0" y="886.0" width="4.2" height="1.7" fill="rgba(70,70,70,0.58)"/><rect x="71.9" y="886.0" width="6.0" height="1.7" fill="rgba(70,70,70,0.69)"/><rect x="78.9" y="886.0" width="3.4" height="1.7" fill="rgba(70,70,70,0.52)"/><rect x="57.8" y="889.3" width="4.4" height="1.7" fill="rgba(70,70,70,0.43)"/><rect x="63.1" y="889.3" width="3.3" height="1.7" fill="rgba(70,70,70,0.55)"/><rect x="67.6" y="889.3" width="5.8" height="1.7" fill="rgba(70,70,70,0.41)"/><rect x="74.2" y="889.3" width="6.0" height="1.7" fill="rgba(70,70,70,0.36)"/><rect x="80.8" y="889.3" width="2.2" height="1.7" fill="rgba(70,70,70,0.42)"/><rect x="57.8" y="892.6" width="4.1" height="1.7" fill="rgba(70,70,70,0.34)"/><rect x="62.8" y="892.6" width="8.0" height="1.7" fill="rgba(70,70,70,0.56)"/><rect x="71.6" y="892.6" width="4.6" height="1.7" fill="rgba(70,70,70,0.38)"/><rect x="57.8" y="895.9" width="6.1" height="1.7" fill="rgba(70,70,70,0.56)"/><rect x="64.7" y="895.9" width="4.5" height="1.7" fill="rgba(70,70,70,0.40)"/><rect x="69.9" y="895.9" width="5.8" height="1.7" fill="rgba(70,70,70,0.46)"/><rect x="76.6" y="895.9" width="1.4" height="1.7" fill="rgba(70,70,70,0.45)"/><rect x="57.8" y="899.2" width="6.1" height="1.7" fill="rgba(70,70,70,0.51)"/><rect x="64.6" y="899.2" width="8.9" height="1.7" fill="rgba(70,70,70,0.42)"/><rect x="74.6" y="899.2" width="1.1" height="1.7" fill="rgba(70,70,70,0.33)"/><rect x="57.8" y="902.5" width="2.9" height="1.7" fill="rgba(70,70,70,0.46)"/><rect x="61.5" y="902.5" width="7.3" height="1.7" fill="rgba(70,70,70,0.35)"/><rect x="69.4" y="902.5" width="8.3" height="1.7" fill="rgba(70,70,70,0.61)"/><rect x="57.8" y="905.8" width="4.8" height="1.7" fill="rgba(70,70,70,0.58)"/><rect x="63.5" y="905.8" width="8.0" height="1.7" fill="rgba(70,70,70,0.64)"/><rect x="72.4" y="905.8" width="4.3" height="1.7" fill="rgba(70,70,70,0.61)"/><rect x="57.8" y="909.1" width="7.6" height="1.7" fill="rgba(70,70,70,0.60)"/><rect x="66.5" y="909.1" width="3.3" height="1.7" fill="rgba(70,70,70,0.67)"/><rect x="70.4" y="909.1" width="7.5" height="1.7" fill="rgba(70,70,70,0.55)"/><rect x="57.8" y="912.4" width="6.2" height="1.7" fill="rgba(70,70,70,0.48)"/><rect x="65.1" y="912.4" width="8.2" height="1.7" fill="rgba(70,70,70,0.56)"/><rect x="74.0" y="912.4" width="5.4" height="1.7" fill="rgba(70,70,70,0.49)"/><rect x="80.5" y="912.4" width="2.7" height="1.7" fill="rgba(70,70,70,0.46)"/><rect x="57.8" y="915.7" width="4.6" height="1.7" fill="rgba(70,70,70,0.63)"/><rect x="63.5" y="915.7" width="5.7" height="1.7" fill="rgba(70,70,70,0.49)"/><rect x="69.9" y="915.7" width="4.5" height="1.7" fill="rgba(70,70,70,0.36)"/><rect x="75.2" y="915.7" width="1.9" height="1.7" fill="rgba(70,70,70,0.34)"/><rect x="57.8" y="919.0" width="8.0" height="1.7" fill="rgba(70,70,70,0.65)"/><rect x="67.0" y="919.0" width="3.8" height="1.7" fill="rgba(70,70,70,0.48)"/><rect x="71.9" y="919.0" width="2.6" height="1.7" fill="rgba(70,70,70,0.32)"/><rect x="75.4" y="919.0" width="1.2" height="1.7" fill="rgba(70,70,70,0.69)"/><rect x="57.8" y="922.3" width="9.0" height="1.7" fill="rgba(70,70,70,0.52)"/><rect x="67.7" y="922.3" width="7.0" height="1.7" fill="rgba(70,70,70,0.46)"/><rect x="75.4" y="922.3" width="3.4" height="1.7" fill="rgba(70,70,70,0.45)"/><rect x="57.8" y="925.6" width="5.9" height="1.7" fill="rgba(70,70,70,0.34)"/><rect x="64.5" y="925.6" width="5.1" height="1.7" fill="rgba(70,70,70,0.54)"/><rect x="70.5" y="925.6" width="8.2" height="1.7" fill="rgba(70,70,70,0.71)"/><rect x="57.8" y="928.9" width="6.6" height="1.7" fill="rgba(70,70,70,0.72)"/><rect x="65.1" y="928.9" width="5.9" height="1.7" fill="rgba(70,70,70,0.64)"/><rect x="71.7" y="928.9" width="4.6" height="1.7" fill="rgba(70,70,70,0.71)"/><rect x="57.8" y="932.2" width="3.2" height="1.7" fill="rgba(70,70,70,0.68)"/><rect x="62.0" y="932.2" width="7.8" height="1.7" fill="rgba(70,70,70,0.72)"/><rect x="71.0" y="932.2" width="5.2" height="1.7" fill="rgba(70,70,70,0.37)"/><rect x="76.9" y="932.2" width="1.6" height="1.7" fill="rgba(70,70,70,0.51)"/><rect x="57.8" y="935.5" width="6.6" height="1.7" fill="rgba(70,70,70,0.55)"/><rect x="65.1" y="935.5" width="9.0" height="1.7" fill="rgba(70,70,70,0.57)"/><rect x="57.8" y="938.8" width="7.6" height="1.7" fill="rgba(70,70,70,0.43)"/><rect x="66.4" y="938.8" width="2.5" height="1.7" fill="rgba(70,70,70,0.43)"/><rect x="70.0" y="938.8" width="6.3" height="1.7" fill="rgba(70,70,70,0.58)"/><rect x="87.4" y="886.0" width="6.1" height="1.7" fill="rgba(70,70,70,0.41)"/><rect x="94.4" y="886.0" width="6.0" height="1.7" fill="rgba(70,70,70,0.72)"/><rect x="101.3" y="886.0" width="5.2" height="1.7" fill="rgba(70,70,70,0.35)"/><rect x="107.1" y="886.0" width="1.9" height="1.7" fill="rgba(70,70,70,0.34)"/><rect x="87.4" y="889.3" width="5.9" height="1.7" fill="rgba(70,70,70,0.65)"/><rect x="94.2" y="889.3" width="7.7" height="1.7" fill="rgba(70,70,70,0.33)"/><rect x="102.5" y="889.3" width="3.0" height="1.7" fill="rgba(70,70,70,0.44)"/><rect x="87.4" y="892.6" width="3.6" height="1.7" fill="rgba(70,70,70,0.41)"/><rect x="91.6" y="892.6" width="8.4" height="1.7" fill="rgba(70,70,70,0.54)"/><rect x="100.7" y="892.6" width="5.4" height="1.7" fill="rgba(70,70,70,0.46)"/><rect x="87.4" y="895.9" width="6.3" height="1.7" fill="rgba(70,70,70,0.70)"/><rect x="94.5" y="895.9" width="6.5" height="1.7" fill="rgba(70,70,70,0.40)"/><rect x="101.6" y="895.9" width="8.6" height="1.7" fill="rgba(70,70,70,0.66)"/><rect x="110.8" y="895.9" width="2.4" height="1.7" fill="rgba(70,70,70,0.64)"/><rect x="87.4" y="899.2" width="8.7" height="1.7" fill="rgba(70,70,70,0.51)"/><rect x="97.3" y="899.2" width="4.1" height="1.7" fill="rgba(70,70,70,0.46)"/><rect x="102.4" y="899.2" width="3.9" height="1.7" fill="rgba(70,70,70,0.43)"/><rect x="107.4" y="899.2" width="2.7" height="1.7" fill="rgba(70,70,70,0.63)"/><rect x="87.4" y="902.5" width="4.8" height="1.7" fill="rgba(70,70,70,0.38)"/><rect x="93.4" y="902.5" width="4.4" height="1.7" fill="rgba(70,70,70,0.54)"/><rect x="98.4" y="902.5" width="6.0" height="1.7" fill="rgba(70,70,70,0.46)"/><rect x="87.4" y="905.8" width="3.3" height="1.7" fill="rgba(70,70,70,0.65)"/><rect x="91.4" y="905.8" width="4.1" height="1.7" fill="rgba(70,70,70,0.38)"/><rect x="96.2" y="905.8" width="4.0" height="1.7" fill="rgba(70,70,70,0.31)"/><rect x="101.2" y="905.8" width="3.1" height="1.7" fill="rgba(70,70,70,0.37)"/><rect x="87.4" y="909.1" width="4.3" height="1.7" fill="rgba(70,70,70,0.65)"/><rect x="92.2" y="909.1" width="5.4" height="1.7" fill="rgba(70,70,70,0.65)"/><rect x="98.7" y="909.1" width="3.5" height="1.7" fill="rgba(70,70,70,0.45)"/><rect x="103.2" y="909.1" width="1.4" height="1.7" fill="rgba(70,70,70,0.70)"/><rect x="87.4" y="912.4" width="5.8" height="1.7" fill="rgba(70,70,70,0.40)"/><rect x="94.0" y="912.4" width="3.4" height="1.7" fill="rgba(70,70,70,0.60)"/><rect x="98.0" y="912.4" width="8.3" height="1.7" fill="rgba(70,70,70,0.55)"/><rect x="107.1" y="912.4" width="4.1" height="1.7" fill="rgba(70,70,70,0.56)"/><rect x="111.9" y="912.4" width="2.0" height="1.7" fill="rgba(70,70,70,0.35)"/><rect x="87.4" y="915.7" width="4.3" height="1.7" fill="rgba(70,70,70,0.62)"/><rect x="92.4" y="915.7" width="6.8" height="1.7" fill="rgba(70,70,70,0.54)"/><rect x="99.9" y="915.7" width="5.0" height="1.7" fill="rgba(70,70,70,0.34)"/><rect x="105.6" y="915.7" width="3.9" height="1.7" fill="rgba(70,70,70,0.43)"/><rect x="87.4" y="919.0" width="6.2" height="1.7" fill="rgba(70,70,70,0.45)"/><rect x="94.4" y="919.0" width="4.4" height="1.7" fill="rgba(70,70,70,0.33)"/><rect x="99.6" y="919.0" width="4.0" height="1.7" fill="rgba(70,70,70,0.35)"/><rect x="87.4" y="922.3" width="5.1" height="1.7" fill="rgba(70,70,70,0.68)"/><rect x="93.6" y="922.3" width="8.2" height="1.7" fill="rgba(70,70,70,0.66)"/><rect x="102.4" y="922.3" width="4.3" height="1.7" fill="rgba(70,70,70,0.31)"/><rect x="87.4" y="925.6" width="4.8" height="1.7" fill="rgba(70,70,70,0.47)"/><rect x="93.1" y="925.6" width="7.0" height="1.7" fill="rgba(70,70,70,0.40)"/><rect x="101.3" y="925.6" width="4.8" height="1.7" fill="rgba(70,70,70,0.56)"/><rect x="106.7" y="925.6" width="3.2" height="1.7" fill="rgba(70,70,70,0.68)"/><rect x="87.4" y="928.9" width="2.8" height="1.7" fill="rgba(70,70,70,0.32)"/><rect x="90.8" y="928.9" width="3.8" height="1.7" fill="rgba(70,70,70,0.43)"/><rect x="95.3" y="928.9" width="2.8" height="1.7" fill="rgba(70,70,70,0.43)"/><rect x="99.0" y="928.9" width="3.7" height="1.7" fill="rgba(70,70,70,0.65)"/><rect x="103.6" y="928.9" width="7.2" height="1.7" fill="rgba(70,70,70,0.41)"/><rect x="87.4" y="932.2" width="4.8" height="1.7" fill="rgba(70,70,70,0.30)"/><rect x="93.3" y="932.2" width="7.5" height="1.7" fill="rgba(70,70,70,0.42)"/><rect x="101.3" y="932.2" width="8.1" height="1.7" fill="rgba(70,70,70,0.56)"/><rect x="109.9" y="932.2" width="1.1" height="1.7" fill="rgba(70,70,70,0.35)"/><rect x="87.4" y="935.5" width="8.4" height="1.7" fill="rgba(70,70,70,0.61)"/><rect x="96.4" y="935.5" width="7.0" height="1.7" fill="rgba(70,70,70,0.47)"/><rect x="104.4" y="935.5" width="1.4" height="1.7" fill="rgba(70,70,70,0.42)"/><rect x="87.4" y="938.8" width="5.3" height="1.7" fill="rgba(70,70,70,0.69)"/><rect x="93.6" y="938.8" width="7.3" height="1.7" fill="rgba(70,70,70,0.65)"/><rect x="101.9" y="938.8" width="5.4" height="1.7" fill="rgba(70,70,70,0.32)"/><rect x="108.3" y="938.8" width="5.3" height="1.7" fill="rgba(70,70,70,0.51)"/><rect x="127.2" y="884.5" width="5.1" height="4.9" fill="#2e86a8"/><rect x="132.1" y="884.5" width="5.1" height="4.9" fill="#d4766e"/><rect x="137.0" y="884.5" width="5.1" height="4.9" fill="#f0b0a8"/><rect x="127.2" y="889.2" width="5.1" height="4.9" fill="#5aa7b8"/><rect x="132.1" y="889.2" width="5.1" height="4.9" fill="#6f9aa0"/><rect x="137.0" y="889.2" width="5.1" height="4.9" fill="#e9a0a0"/><rect x="127.2" y="893.9" width="5.1" height="4.9" fill="#8fb9c4"/><rect x="132.1" y="893.9" width="5.1" height="4.9" fill="#2e86a8"/><rect x="137.0" y="893.9" width="5.1" height="4.9" fill="#d4766e"/><rect x="127.2" y="898.6" width="5.1" height="4.9" fill="#f0b0a8"/><rect x="132.1" y="898.6" width="5.1" height="4.9" fill="#5aa7b8"/><rect x="137.0" y="898.6" width="5.1" height="4.9" fill="#6f9aa0"/><rect x="127.2" y="903.2" width="5.1" height="4.9" fill="#e9a0a0"/><rect x="132.1" y="903.2" width="5.1" height="4.9" fill="#8fb9c4"/><rect x="137.0" y="903.2" width="5.1" height="4.9" fill="#2e86a8"/><rect x="127.2" y="907.9" width="5.1" height="4.9" fill="#d4766e"/><rect x="132.1" y="907.9" width="5.1" height="4.9" fill="#f0b0a8"/><rect x="137.0" y="907.9" width="5.1" height="4.9" fill="#5aa7b8"/><rect x="127.2" y="912.6" width="5.1" height="4.9" fill="#6f9aa0"/><rect x="132.1" y="912.6" width="5.1" height="4.9" fill="#e9a0a0"/><rect x="137.0" y="912.6" width="5.1" height="4.9" fill="#8fb9c4"/><rect x="127.2" y="917.3" width="5.1" height="4.9" fill="#2e86a8"/><rect x="132.1" y="917.3" width="5.1" height="4.9" fill="#d4766e"/><rect x="137.0" y="917.3" width="5.1" height="4.9" fill="#f0b0a8"/><rect x="127.2" y="926.2" width="13.8" height="1.4" fill="#7fa3a3"/><rect x="127.2" y="929.2" width="12.8" height="1.4" fill="#7fa3a3"/><rect x="27" y="944.9" width="117.7" height="6.8" fill="#ffc933"/></svg>
<span class="t" style="left:64px;width:40px;text-align:center;top:967.9px;font-size:14px;line-height:15px;font-weight:bold;color:#333">4</span>
<div class="r" style="left:170.4px;top:270.4px;width:20.2px;height:711.0px;background:#dcdcdc;"></div>
<div class="r" style="left:170.4px;top:270.4px;width:20.2px;height:20.0px;background:#fff;border:1.8px solid #adadad;"></div>
<svg class="r" style="left:176.5px;top:277.5px;" width="8" height="5" viewBox="0 0 8 5"><path d="M0 4.2H8L4 0Z" fill="#777"/><rect y="4.2" width="8" height="0.8" fill="#777"/></svg>
<div class="r" style="left:170.4px;top:410.6px;width:20.2px;height:549.4px;background:#fff;border:1.8px solid #adadad;"></div>
<div class="r" style="left:170.4px;top:965.7px;width:20.2px;height:20.0px;background:#fff;border:1.8px solid #adadad;"></div>
<svg class="r" style="left:176.5px;top:973.0px;" width="8" height="5" viewBox="0 0 8 5"><path d="M0 0H8L4 4.4Z" fill="#777"/></svg>
<div class="r" style="left:194.3px;top:213.8px;width:1.8px;height:768.0px;background:#bababa;"></div>
<div class="r" style="left:196.2px;top:211.0px;width:34.8px;height:1.5px;background:#cdcdcd;"></div>
<div class="r" style="left:196.2px;top:211.0px;width:1.3px;height:757.0px;background:#cbcbcb;"></div>
<div class="r" style="left:197.4px;top:243.9px;width:1699.0px;height:1.9px;background:#cbcbcb;"></div>
<div class="r" style="left:229.5px;top:211.0px;width:2.0px;height:757.0px;background:#d2d2d2;"></div>
<div class="r" style="left:231.5px;top:236.8px;width:1665.5px;height:2.0px;background:#d6d6d6;"></div>
<div class="r" style="left:1183.8px;top:239.0px;width:97.3px;height:4.8px;background:#fff;"></div>
<div class="r" style="left:224.8px;top:489.6px;width:3.9px;height:216.6px;background:#fff;"></div>
<div class="r" style="left:222.8px;top:246.0px;width:1.8px;height:722.0px;background:#d6d6d6;"></div>
<svg class="r" style="left:0;top:211px;font-family:'Liberation Sans',sans-serif" width="1897" height="30" viewBox="0 211 1897 30"><rect x="231.0" y="223.3" width="1.6" height="14" fill="#3f3f3f"/><rect x="237.8" y="230.3" width="1.1" height="7" fill="#3f3f3f"/><rect x="245.1" y="228.3" width="1.6" height="9" fill="#3f3f3f"/><rect x="253.0" y="230.3" width="1.1" height="7" fill="#3f3f3f"/><rect x="260.4" y="214" width="1.5" height="23.3" fill="#3f3f3f"/><text x="263.7" y="227.9" font-size="13" fill="#4a4a4a">9</text><rect x="268.1" y="230.3" width="1.1" height="7" fill="#3f3f3f"/><rect x="275.6" y="229.9" width="1.3" height="7.4" fill="#3f3f3f"/><rect x="283.2" y="230.3" width="1.1" height="7" fill="#3f3f3f"/><rect x="290.6" y="223.3" width="1.6" height="14" fill="#3f3f3f"/><rect x="298.4" y="230.3" width="1.1" height="7" fill="#3f3f3f"/><rect x="305.7" y="228.3" width="1.6" height="9" fill="#3f3f3f"/><rect x="313.5" y="230.3" width="1.1" height="7" fill="#3f3f3f"/><rect x="320.9" y="214" width="1.5" height="23.3" fill="#3f3f3f"/><text x="324.2" y="227.9" font-size="13" fill="#4a4a4a">8</text><rect x="328.6" y="230.3" width="1.1" height="7" fill="#3f3f3f"/><rect x="336.1" y="229.9" width="1.3" height="7.4" fill="#3f3f3f"/><rect x="343.8" y="230.3" width="1.1" height="7" fill="#3f3f3f"/><rect x="351.1" y="223.3" width="1.6" height="14" fill="#3f3f3f"/><rect x="358.9" y="230.3" width="1.1" height="7" fill="#3f3f3f"/><rect x="366.2" y="228.3" width="1.6" height="9" fill="#3f3f3f"/><rect x="374.1" y="230.3" width="1.1" height="7" fill="#3f3f3f"/><rect x="381.5" y="214" width="1.5" height="23.3" fill="#3f3f3f"/><text x="384.8" y="227.9" font-size="13" fill="#4a4a4a">7</text><rect x="389.2" y="230.3" width="1.1" height="7" fill="#3f3f3f"/><rect x="396.7" y="229.9" width="1.3" height="7.4" fill="#3f3f3f"/><rect x="404.3" y="230.3" width="1.1" height="7" fill="#3f3f3f"/><rect x="411.6" y="223.3" width="1.6" height="14" fill="#3f3f3f"/><rect x="419.5" y="230.3" width="1.1" height="7" fill="#3f3f3f"/><rect x="426.8" y="228.3" width="1.6" height="9" fill="#3f3f3f"/><rect x="434.6" y="230.3" width="1.1" height="7" fill="#3f3f3f"/><rect x="442.0" y="214" width="1.5" height="23.3" fill="#3f3f3f"/><text x="445.3" y="227.9" font-size="13" fill="#4a4a4a">6</text><rect x="449.7" y="230.3" width="1.1" height="7" fill="#3f3f3f"/><rect x="457.2" y="229.9" width="1.3" height="7.4" fill="#3f3f3f"/><rect x="464.9" y="230.3" width="1.1" height="7" fill="#3f3f3f"/><rect x="472.2" y="223.3" width="1.6" height="14" fill="#3f3f3f"/><rect x="480.0" y="230.3" width="1.1" height="7" fill="#3f3f3f"/><rect x="487.3" y="228.3" width="1.6" height="9" fill="#3f3f3f"/><rect x="495.1" y="230.3" width="1.1" height="7" fill="#3f3f3f"/><rect x="502.6" y="214" width="1.5" height="23.3" fill="#3f3f3f"/><text x="505.9" y="227.9" font-size="13" fill="#4a4a4a">5</text><rect x="510.3" y="230.3" width="1.1" height="7" fill="#3f3f3f"/><rect x="517.8" y="229.9" width="1.3" height="7.4" fill="#3f3f3f"/><rect x="525.4" y="230.3" width="1.1" height="7" fill="#3f3f3f"/><rect x="532.7" y="223.3" width="1.6" height="14" fill="#3f3f3f"/><rect x="540.6" y="230.3" width="1.1" height="7" fill="#3f3f3f"/><rect x="547.9" y="228.3" width="1.6" height="9" fill="#3f3f3f"/><rect x="555.7" y="230.3" width="1.1" height="7" fill="#3f3f3f"/><rect x="563.1" y="214" width="1.5" height="23.3" fill="#3f3f3f"/><text x="566.4" y="227.9" font-size="13" fill="#4a4a4a">4</text><rect x="570.8" y="230.3" width="1.1" height="7" fill="#3f3f3f"/><rect x="578.3" y="229.9" width="1.3" height="7.4" fill="#3f3f3f"/><rect x="586.0" y="230.3" width="1.1" height="7" fill="#3f3f3f"/><rect x="593.3" y="223.3" width="1.6" height="14" fill="#3f3f3f"/><rect x="601.1" y="230.3" width="1.1" height="7" fill="#3f3f3f"/><rect x="608.4" y="228.3" width="1.6" height="9" fill="#3f3f3f"/><rect x="616.2" y="230.3" width="1.1" height="7" fill="#3f3f3f"/><rect x="623.7" y="214" width="1.5" height="23.3" fill="#3f3f3f"/><text x="627.0" y="227.9" font-size="13" fill="#4a4a4a">3</text><rect x="631.4" y="230.3" width="1.1" height="7" fill="#3f3f3f"/><rect x="638.8" y="229.9" width="1.3" height="7.4" fill="#3f3f3f"/><rect x="646.5" y="230.3" width="1.1" height="7" fill="#3f3f3f"/><rect x="653.8" y="223.3" width="1.6" height="14" fill="#3f3f3f"/><rect x="661.7" y="230.3" width="1.1" height="7" fill="#3f3f3f"/><rect x="669.0" y="228.3" width="1.6" height="9" fill="#3f3f3f"/><rect x="676.8" y="230.3" width="1.1" height="7" fill="#3f3f3f"/><rect x="684.2" y="214" width="1.5" height="23.3" fill="#3f3f3f"/><text x="687.5" y="227.9" font-size="13" fill="#4a4a4a">2</text><rect x="691.9" y="230.3" width="1.1" height="7" fill="#3f3f3f"/><rect x="699.4" y="229.9" width="1.3" height="7.4" fill="#3f3f3f"/><rect x="707.1" y="230.3" width="1.1" height="7" fill="#3f3f3f"/><rect x="714.4" y="223.3" width="1.6" height="14" fill="#3f3f3f"/><rect x="722.2" y="230.3" width="1.1" height="7" fill="#3f3f3f"/><rect x="729.5" y="228.3" width="1.6" height="9" fill="#3f3f3f"/><rect x="737.3" y="230.3" width="1.1" height="7" fill="#3f3f3f"/><rect x="744.8" y="214" width="1.5" height="23.3" fill="#3f3f3f"/><text x="748.1" y="227.9" font-size="13" fill="#4a4a4a">1</text><rect x="752.5" y="230.3" width="1.1" height="7" fill="#3f3f3f"/><rect x="759.9" y="229.9" width="1.3" height="7.4" fill="#3f3f3f"/><rect x="767.6" y="230.3" width="1.1" height="7" fill="#3f3f3f"/><rect x="774.9" y="223.3" width="1.6" height="14" fill="#3f3f3f"/><rect x="782.7" y="230.3" width="1.1" height="7" fill="#3f3f3f"/><rect x="790.1" y="228.3" width="1.6" height="9" fill="#3f3f3f"/><rect x="797.9" y="230.3" width="1.1" height="7" fill="#3f3f3f"/><rect x="805.3" y="214" width="1.5" height="23.3" fill="#3f3f3f"/><text x="808.6" y="227.9" font-size="13" fill="#4a4a4a">0</text><rect x="813.0" y="230.3" width="1.1" height="7" fill="#3f3f3f"/><rect x="820.5" y="229.9" width="1.3" height="7.4" fill="#3f3f3f"/><rect x="828.2" y="230.3" width="1.1" height="7" fill="#3f3f3f"/><rect x="835.5" y="223.3" width="1.6" height="14" fill="#3f3f3f"/><rect x="843.3" y="230.3" width="1.1" height="7" fill="#3f3f3f"/><rect x="850.6" y="228.3" width="1.6" height="9" fill="#3f3f3f"/><rect x="858.4" y="230.3" width="1.1" height="7" fill="#3f3f3f"/><rect x="865.8" y="214" width="1.5" height="23.3" fill="#3f3f3f"/><text x="869.1" y="227.9" font-size="13" fill="#4a4a4a">1</text><rect x="873.6" y="230.3" width="1.1" height="7" fill="#3f3f3f"/><rect x="881.0" y="229.9" width="1.3" height="7.4" fill="#3f3f3f"/><rect x="888.7" y="230.3" width="1.1" height="7" fill="#3f3f3f"/><rect x="896.0" y="223.3" width="1.6" height="14" fill="#3f3f3f"/><rect x="903.8" y="230.3" width="1.1" height="7" fill="#3f3f3f"/><rect x="911.2" y="228.3" width="1.6" height="9" fill="#3f3f3f"/><rect x="919.0" y="230.3" width="1.1" height="7" fill="#3f3f3f"/><rect x="926.4" y="214" width="1.5" height="23.3" fill="#3f3f3f"/><text x="929.7" y="227.9" font-size="13" fill="#4a4a4a">2</text><rect x="934.1" y="230.3" width="1.1" height="7" fill="#3f3f3f"/><rect x="941.6" y="229.9" width="1.3" height="7.4" fill="#3f3f3f"/><rect x="949.2" y="230.3" width="1.1" height="7" fill="#3f3f3f"/><rect x="956.6" y="223.3" width="1.6" height="14" fill="#3f3f3f"/><rect x="964.4" y="230.3" width="1.1" height="7" fill="#3f3f3f"/><rect x="971.7" y="228.3" width="1.6" height="9" fill="#3f3f3f"/><rect x="979.5" y="230.3" width="1.1" height="7" fill="#3f3f3f"/><rect x="986.9" y="214" width="1.5" height="23.3" fill="#3f3f3f"/><text x="990.2" y="227.9" font-size="13" fill="#4a4a4a">3</text><rect x="994.7" y="230.3" width="1.1" height="7" fill="#3f3f3f"/><rect x="1002.1" y="229.9" width="1.3" height="7.4" fill="#3f3f3f"/><rect x="1009.8" y="230.3" width="1.1" height="7" fill="#3f3f3f"/><rect x="1017.1" y="223.3" width="1.6" height="14" fill="#3f3f3f"/><rect x="1024.9" y="230.3" width="1.1" height="7" fill="#3f3f3f"/><rect x="1032.3" y="228.3" width="1.6" height="9" fill="#3f3f3f"/><rect x="1040.1" y="230.3" width="1.1" height="7" fill="#3f3f3f"/><rect x="1047.5" y="214" width="1.5" height="23.3" fill="#3f3f3f"/><text x="1050.8" y="227.9" font-size="13" fill="#4a4a4a">4</text><rect x="1055.2" y="230.3" width="1.1" height="7" fill="#3f3f3f"/><rect x="1062.7" y="229.9" width="1.3" height="7.4" fill="#3f3f3f"/><rect x="1070.3" y="230.3" width="1.1" height="7" fill="#3f3f3f"/><rect x="1077.7" y="223.3" width="1.6" height="14" fill="#3f3f3f"/><rect x="1085.5" y="230.3" width="1.1" height="7" fill="#3f3f3f"/><rect x="1092.8" y="228.3" width="1.6" height="9" fill="#3f3f3f"/><rect x="1100.6" y="230.3" width="1.1" height="7" fill="#3f3f3f"/><rect x="1108.0" y="214" width="1.5" height="23.3" fill="#3f3f3f"/><text x="1111.3" y="227.9" font-size="13" fill="#4a4a4a">5</text><rect x="1115.8" y="230.3" width="1.1" height="7" fill="#3f3f3f"/><rect x="1123.2" y="229.9" width="1.3" height="7.4" fill="#3f3f3f"/><rect x="1130.9" y="230.3" width="1.1" height="7" fill="#3f3f3f"/><rect x="1138.2" y="223.3" width="1.6" height="14" fill="#3f3f3f"/><rect x="1146.0" y="230.3" width="1.1" height="7" fill="#3f3f3f"/><rect x="1153.3" y="228.3" width="1.6" height="9" fill="#3f3f3f"/><rect x="1161.2" y="230.3" width="1.1" height="7" fill="#3f3f3f"/><rect x="1168.6" y="214" width="1.5" height="23.3" fill="#3f3f3f"/><text x="1171.9" y="227.9" font-size="13" fill="#4a4a4a">6</text><rect x="1176.3" y="230.3" width="1.1" height="7" fill="#3f3f3f"/><rect x="1183.8" y="229.9" width="1.3" height="7.4" fill="#3f3f3f"/><rect x="1191.4" y="230.3" width="1.1" height="7" fill="#3f3f3f"/><rect x="1198.8" y="223.3" width="1.6" height="14" fill="#3f3f3f"/><rect x="1206.6" y="230.3" width="1.1" height="7" fill="#3f3f3f"/><rect x="1213.9" y="228.3" width="1.6" height="9" fill="#3f3f3f"/><rect x="1221.7" y="230.3" width="1.1" height="7" fill="#3f3f3f"/><rect x="1229.1" y="214" width="1.5" height="23.3" fill="#3f3f3f"/><text x="1232.4" y="227.9" font-size="13" fill="#4a4a4a">7</text><rect x="1236.8" y="230.3" width="1.1" height="7" fill="#3f3f3f"/><rect x="1244.3" y="229.9" width="1.3" height="7.4" fill="#3f3f3f"/><rect x="1252.0" y="230.3" width="1.1" height="7" fill="#3f3f3f"/><rect x="1259.3" y="223.3" width="1.6" height="14" fill="#3f3f3f"/><rect x="1267.1" y="230.3" width="1.1" height="7" fill="#3f3f3f"/><rect x="1274.4" y="228.3" width="1.6" height="9" fill="#3f3f3f"/><rect x="1282.3" y="230.3" width="1.1" height="7" fill="#3f3f3f"/><rect x="1289.7" y="214" width="1.5" height="23.3" fill="#3f3f3f"/><text x="1293.0" y="227.9" font-size="13" fill="#4a4a4a">8</text><rect x="1297.4" y="230.3" width="1.1" height="7" fill="#3f3f3f"/><rect x="1304.9" y="229.9" width="1.3" height="7.4" fill="#3f3f3f"/><rect x="1312.5" y="230.3" width="1.1" height="7" fill="#3f3f3f"/><rect x="1319.8" y="223.3" width="1.6" height="14" fill="#3f3f3f"/><rect x="1327.7" y="230.3" width="1.1" height="7" fill="#3f3f3f"/><rect x="1335.0" y="228.3" width="1.6" height="9" fill="#3f3f3f"/><rect x="1342.8" y="230.3" width="1.1" height="7" fill="#3f3f3f"/><rect x="1350.2" y="214" width="1.5" height="23.3" fill="#3f3f3f"/><text x="1353.5" y="227.9" font-size="13" fill="#4a4a4a">9</text><rect x="1357.9" y="230.3" width="1.1" height="7" fill="#3f3f3f"/><rect x="1365.4" y="229.9" width="1.3" height="7.4" fill="#3f3f3f"/><rect x="1373.1" y="230.3" width="1.1" height="7" fill="#3f3f3f"/><rect x="1380.4" y="223.3" width="1.6" height="14" fill="#3f3f3f"/><rect x="1388.2" y="230.3" width="1.1" height="7" fill="#3f3f3f"/><rect x="1395.5" y="228.3" width="1.6" height="9" fill="#3f3f3f"/><rect x="1403.4" y="230.3" width="1.1" height="7" fill="#3f3f3f"/><rect x="1410.8" y="214" width="1.5" height="23.3" fill="#3f3f3f"/><text x="1414.1" y="227.9" font-size="13" fill="#4a4a4a">10</text><rect x="1418.5" y="230.3" width="1.1" height="7" fill="#3f3f3f"/><rect x="1426.0" y="229.9" width="1.3" height="7.4" fill="#3f3f3f"/><rect x="1433.6" y="230.3" width="1.1" height="7" fill="#3f3f3f"/><rect x="1440.9" y="223.3" width="1.6" height="14" fill="#3f3f3f"/><rect x="1448.8" y="230.3" width="1.1" height="7" fill="#3f3f3f"/><rect x="1456.1" y="228.3" width="1.6" height="9" fill="#3f3f3f"/><rect x="1463.9" y="230.3" width="1.1" height="7" fill="#3f3f3f"/><rect x="1471.3" y="214" width="1.5" height="23.3" fill="#3f3f3f"/><text x="1474.6" y="227.9" font-size="13" fill="#4a4a4a">11</text><rect x="1479.0" y="230.3" width="1.1" height="7" fill="#3f3f3f"/><rect x="1486.5" y="229.9" width="1.3" height="7.4" fill="#3f3f3f"/><rect x="1494.2" y="230.3" width="1.1" height="7" fill="#3f3f3f"/><rect x="1501.5" y="223.3" width="1.6" height="14" fill="#3f3f3f"/><rect x="1509.3" y="230.3" width="1.1" height="7" fill="#3f3f3f"/><rect x="1516.6" y="228.3" width="1.6" height="9" fill="#3f3f3f"/><rect x="1524.4" y="230.3" width="1.1" height="7" fill="#3f3f3f"/><rect x="1531.9" y="214" width="1.5" height="23.3" fill="#3f3f3f"/><text x="1535.2" y="227.9" font-size="13" fill="#4a4a4a">12</text><rect x="1539.6" y="230.3" width="1.1" height="7" fill="#3f3f3f"/><rect x="1547.1" y="229.9" width="1.3" height="7.4" fill="#3f3f3f"/><rect x="1554.7" y="230.3" width="1.1" height="7" fill="#3f3f3f"/><rect x="1562.0" y="223.3" width="1.6" height="14" fill="#3f3f3f"/><rect x="1569.9" y="230.3" width="1.1" height="7" fill="#3f3f3f"/><rect x="1577.2" y="228.3" width="1.6" height="9" fill="#3f3f3f"/><rect x="1585.0" y="230.3" width="1.1" height="7" fill="#3f3f3f"/><rect x="1592.4" y="214" width="1.5" height="23.3" fill="#3f3f3f"/><text x="1595.7" y="227.9" font-size="13" fill="#4a4a4a">13</text><rect x="1600.1" y="230.3" width="1.1" height="7" fill="#3f3f3f"/><rect x="1607.6" y="229.9" width="1.3" height="7.4" fill="#3f3f3f"/><rect x="1615.3" y="230.3" width="1.1" height="7" fill="#3f3f3f"/><rect x="1622.6" y="223.3" width="1.6" height="14" fill="#3f3f3f"/><rect x="1630.4" y="230.3" width="1.1" height="7" fill="#3f3f3f"/><rect x="1637.7" y="228.3" width="1.6" height="9" fill="#3f3f3f"/><rect x="1645.5" y="230.3" width="1.1" height="7" fill="#3f3f3f"/><rect x="1653.0" y="214" width="1.5" height="23.3" fill="#3f3f3f"/><text x="1656.3" y="227.9" font-size="13" fill="#4a4a4a">14</text><rect x="1660.7" y="230.3" width="1.1" height="7" fill="#3f3f3f"/><rect x="1668.1" y="229.9" width="1.3" height="7.4" fill="#3f3f3f"/><rect x="1675.8" y="230.3" width="1.1" height="7" fill="#3f3f3f"/><rect x="1683.1" y="223.3" width="1.6" height="14" fill="#3f3f3f"/><rect x="1690.9" y="230.3" width="1.1" height="7" fill="#3f3f3f"/><rect x="1698.3" y="228.3" width="1.6" height="9" fill="#3f3f3f"/><rect x="1706.1" y="230.3" width="1.1" height="7" fill="#3f3f3f"/><rect x="1713.5" y="214" width="1.5" height="23.3" fill="#3f3f3f"/><text x="1716.8" y="227.9" font-size="13" fill="#4a4a4a">15</text><rect x="1721.2" y="230.3" width="1.1" height="7" fill="#3f3f3f"/><rect x="1728.7" y="229.9" width="1.3" height="7.4" fill="#3f3f3f"/><rect x="1736.4" y="230.3" width="1.1" height="7" fill="#3f3f3f"/><rect x="1743.7" y="223.3" width="1.6" height="14" fill="#3f3f3f"/><rect x="1751.5" y="230.3" width="1.1" height="7" fill="#3f3f3f"/><rect x="1758.8" y="228.3" width="1.6" height="9" fill="#3f3f3f"/><rect x="1766.6" y="230.3" width="1.1" height="7" fill="#3f3f3f"/><rect x="1774.1" y="214" width="1.5" height="23.3" fill="#3f3f3f"/><text x="1777.4" y="227.9" font-size="13" fill="#4a4a4a">16</text><rect x="1781.8" y="230.3" width="1.1" height="7" fill="#3f3f3f"/><rect x="1789.2" y="229.9" width="1.3" height="7.4" fill="#3f3f3f"/><rect x="1796.9" y="230.3" width="1.1" height="7" fill="#3f3f3f"/><rect x="1804.2" y="223.3" width="1.6" height="14" fill="#3f3f3f"/><rect x="1812.0" y="230.3" width="1.1" height="7" fill="#3f3f3f"/><rect x="1819.4" y="228.3" width="1.6" height="9" fill="#3f3f3f"/><rect x="1827.2" y="230.3" width="1.1" height="7" fill="#3f3f3f"/><rect x="1834.6" y="214" width="1.5" height="23.3" fill="#3f3f3f"/><text x="1837.9" y="227.9" font-size="13" fill="#4a4a4a">17</text><rect x="1842.3" y="230.3" width="1.1" height="7" fill="#3f3f3f"/><rect x="1849.8" y="229.9" width="1.3" height="7.4" fill="#3f3f3f"/><rect x="1857.5" y="230.3" width="1.1" height="7" fill="#3f3f3f"/><rect x="1864.8" y="223.3" width="1.6" height="14" fill="#3f3f3f"/><rect x="1872.6" y="230.3" width="1.1" height="7" fill="#3f3f3f"/><rect x="1879.9" y="228.3" width="1.6" height="9" fill="#3f3f3f"/><rect x="1887.7" y="230.3" width="1.1" height="7" fill="#3f3f3f"/><rect x="1895.1" y="214" width="1.5" height="23.3" fill="#3f3f3f"/></svg>
<svg class="r" style="left:196px;top:246px;font-family:'Liberation Sans',sans-serif" width="34" height="722" viewBox="196 246 34 722"><rect x="215.4" y="251.2" width="7" height="1.1" fill="#3f3f3f"/><rect x="213.4" y="258.5" width="9" height="1.6" fill="#3f3f3f"/><rect x="215.4" y="266.3" width="7" height="1.1" fill="#3f3f3f"/><rect x="198" y="273.7" width="24.4" height="1.5" fill="#3f3f3f"/><text x="201.4" y="290.8" font-size="13" fill="#4a4a4a">0</text><rect x="215.4" y="281.4" width="7" height="1.1" fill="#3f3f3f"/><rect x="215.0" y="288.8" width="7.4" height="1.3" fill="#3f3f3f"/><rect x="215.4" y="296.5" width="7" height="1.1" fill="#3f3f3f"/><rect x="208.4" y="303.8" width="14" height="1.6" fill="#3f3f3f"/><rect x="215.4" y="311.6" width="7" height="1.1" fill="#3f3f3f"/><rect x="213.4" y="318.9" width="9" height="1.6" fill="#3f3f3f"/><rect x="215.4" y="326.7" width="7" height="1.1" fill="#3f3f3f"/><rect x="198" y="334.1" width="24.4" height="1.5" fill="#3f3f3f"/><text x="201.4" y="351.2" font-size="13" fill="#4a4a4a">1</text><rect x="215.4" y="341.8" width="7" height="1.1" fill="#3f3f3f"/><rect x="215.0" y="349.2" width="7.4" height="1.3" fill="#3f3f3f"/><rect x="215.4" y="356.9" width="7" height="1.1" fill="#3f3f3f"/><rect x="208.4" y="364.2" width="14" height="1.6" fill="#3f3f3f"/><rect x="215.4" y="372.0" width="7" height="1.1" fill="#3f3f3f"/><rect x="213.4" y="379.3" width="9" height="1.6" fill="#3f3f3f"/><rect x="215.4" y="387.1" width="7" height="1.1" fill="#3f3f3f"/><rect x="198" y="394.5" width="24.4" height="1.5" fill="#3f3f3f"/><text x="201.4" y="411.6" font-size="13" fill="#4a4a4a">2</text><rect x="215.4" y="402.2" width="7" height="1.1" fill="#3f3f3f"/><rect x="215.0" y="409.6" width="7.4" height="1.3" fill="#3f3f3f"/><rect x="215.4" y="417.3" width="7" height="1.1" fill="#3f3f3f"/><rect x="208.4" y="424.5" width="14" height="1.6" fill="#3f3f3f"/><rect x="215.4" y="432.3" width="7" height="1.1" fill="#3f3f3f"/><rect x="213.4" y="439.6" width="9" height="1.6" fill="#3f3f3f"/><rect x="215.4" y="447.4" width="7" height="1.1" fill="#3f3f3f"/><rect x="198" y="454.8" width="24.4" height="1.5" fill="#3f3f3f"/><text x="201.4" y="471.9" font-size="13" fill="#4a4a4a">3</text><rect x="215.4" y="462.5" width="7" height="1.1" fill="#3f3f3f"/><rect x="215.0" y="470.0" width="7.4" height="1.3" fill="#3f3f3f"/><rect x="215.4" y="477.6" width="7" height="1.1" fill="#3f3f3f"/><rect x="208.4" y="484.9" width="14" height="1.6" fill="#3f3f3f"/><rect x="215.4" y="492.7" width="7" height="1.1" fill="#3f3f3f"/><rect x="213.4" y="500.0" width="9" height="1.6" fill="#3f3f3f"/><rect x="215.4" y="507.8" width="7" height="1.1" fill="#3f3f3f"/><rect x="198" y="515.2" width="24.4" height="1.5" fill="#3f3f3f"/><text x="201.4" y="532.3" font-size="13" fill="#4a4a4a">4</text><rect x="215.4" y="522.9" width="7" height="1.1" fill="#3f3f3f"/><rect x="215.0" y="530.4" width="7.4" height="1.3" fill="#3f3f3f"/><rect x="215.4" y="538.0" width="7" height="1.1" fill="#3f3f3f"/><rect x="208.4" y="545.3" width="14" height="1.6" fill="#3f3f3f"/><rect x="215.4" y="553.1" width="7" height="1.1" fill="#3f3f3f"/><rect x="213.4" y="560.4" width="9" height="1.6" fill="#3f3f3f"/><rect x="215.4" y="568.2" width="7" height="1.1" fill="#3f3f3f"/><rect x="198" y="575.6" width="24.4" height="1.5" fill="#3f3f3f"/><text x="201.4" y="592.7" font-size="13" fill="#4a4a4a">5</text><rect x="215.4" y="583.3" width="7" height="1.1" fill="#3f3f3f"/><rect x="215.0" y="590.7" width="7.4" height="1.3" fill="#3f3f3f"/><rect x="215.4" y="598.4" width="7" height="1.1" fill="#3f3f3f"/><rect x="208.4" y="605.7" width="14" height="1.6" fill="#3f3f3f"/><rect x="215.4" y="613.5" width="7" height="1.1" fill="#3f3f3f"/><rect x="213.4" y="620.8" width="9" height="1.6" fill="#3f3f3f"/><rect x="215.4" y="628.6" width="7" height="1.1" fill="#3f3f3f"/><rect x="198" y="636.0" width="24.4" height="1.5" fill="#3f3f3f"/><text x="201.4" y="653.1" font-size="13" fill="#4a4a4a">6</text><rect x="215.4" y="643.7" width="7" height="1.1" fill="#3f3f3f"/><rect x="215.0" y="651.1" width="7.4" height="1.3" fill="#3f3f3f"/><rect x="215.4" y="658.8" width="7" height="1.1" fill="#3f3f3f"/><rect x="208.4" y="666.1" width="14" height="1.6" fill="#3f3f3f"/><rect x="215.4" y="673.9" width="7" height="1.1" fill="#3f3f3f"/><rect x="213.4" y="681.2" width="9" height="1.6" fill="#3f3f3f"/><rect x="215.4" y="689.0" width="7" height="1.1" fill="#3f3f3f"/><rect x="198" y="696.4" width="24.4" height="1.5" fill="#3f3f3f"/><text x="201.4" y="713.5" font-size="13" fill="#4a4a4a">7</text><rect x="215.4" y="704.1" width="7" height="1.1" fill="#3f3f3f"/><rect x="215.0" y="711.5" width="7.4" height="1.3" fill="#3f3f3f"/><rect x="215.4" y="719.2" width="7" height="1.1" fill="#3f3f3f"/><rect x="208.4" y="726.5" width="14" height="1.6" fill="#3f3f3f"/><rect x="215.4" y="734.2" width="7" height="1.1" fill="#3f3f3f"/><rect x="213.4" y="741.5" width="9" height="1.6" fill="#3f3f3f"/><rect x="215.4" y="749.3" width="7" height="1.1" fill="#3f3f3f"/><rect x="198" y="756.7" width="24.4" height="1.5" fill="#3f3f3f"/><text x="201.4" y="773.8" font-size="13" fill="#4a4a4a">8</text><rect x="215.4" y="764.4" width="7" height="1.1" fill="#3f3f3f"/><rect x="215.0" y="771.9" width="7.4" height="1.3" fill="#3f3f3f"/><rect x="215.4" y="779.5" width="7" height="1.1" fill="#3f3f3f"/><rect x="208.4" y="786.8" width="14" height="1.6" fill="#3f3f3f"/><rect x="215.4" y="794.6" width="7" height="1.1" fill="#3f3f3f"/><rect x="213.4" y="801.9" width="9" height="1.6" fill="#3f3f3f"/><rect x="215.4" y="809.7" width="7" height="1.1" fill="#3f3f3f"/><rect x="198" y="817.1" width="24.4" height="1.5" fill="#3f3f3f"/><text x="201.4" y="834.2" font-size="13" fill="#4a4a4a">9</text><rect x="215.4" y="824.8" width="7" height="1.1" fill="#3f3f3f"/><rect x="215.0" y="832.3" width="7.4" height="1.3" fill="#3f3f3f"/><rect x="215.4" y="839.9" width="7" height="1.1" fill="#3f3f3f"/><rect x="208.4" y="847.2" width="14" height="1.6" fill="#3f3f3f"/><rect x="215.4" y="855.0" width="7" height="1.1" fill="#3f3f3f"/><rect x="213.4" y="862.3" width="9" height="1.6" fill="#3f3f3f"/><rect x="215.4" y="870.1" width="7" height="1.1" fill="#3f3f3f"/><rect x="198" y="877.5" width="24.4" height="1.5" fill="#3f3f3f"/><text x="200.6" y="894.6" font-size="13" fill="#4a4a4a" textLength="13.4" lengthAdjust="spacingAndGlyphs">10</text><rect x="215.4" y="885.2" width="7" height="1.1" fill="#3f3f3f"/><rect x="215.0" y="892.6" width="7.4" height="1.3" fill="#3f3f3f"/><rect x="215.4" y="900.3" width="7" height="1.1" fill="#3f3f3f"/><rect x="208.4" y="907.6" width="14" height="1.6" fill="#3f3f3f"/><rect x="215.4" y="915.4" width="7" height="1.1" fill="#3f3f3f"/><rect x="213.4" y="922.7" width="9" height="1.6" fill="#3f3f3f"/><rect x="215.4" y="930.5" width="7" height="1.1" fill="#3f3f3f"/><rect x="198" y="937.9" width="24.4" height="1.5" fill="#3f3f3f"/><text x="200.6" y="955.0" font-size="13" fill="#4a4a4a" textLength="13.4" lengthAdjust="spacingAndGlyphs">11</text><rect x="215.4" y="945.6" width="7" height="1.1" fill="#3f3f3f"/><rect x="215.0" y="953.0" width="7.4" height="1.3" fill="#3f3f3f"/><rect x="215.4" y="960.7" width="7" height="1.1" fill="#3f3f3f"/></svg>
<div class="r" style="left:197.4px;top:968.6px;width:1700.0px;height:13.0px;background:#e6e6e6;"></div>
<div class="r" style="left:198.0px;top:968.6px;width:21.0px;height:14.0px;background:#fff;border:1.8px solid #adadad;"></div>
<svg class="r" style="left:205.0px;top:972.0px;" width="6" height="9" viewBox="0 0 6 9"><path d="M5.5 0V9L0 4.5Z" fill="#777"/></svg>
<div class="r" style="left:400.0px;top:968.6px;width:1266.0px;height:14.0px;background:#fff;border:1.8px solid #adadad;"></div>
<div class="r" style="left:1872.6px;top:968.6px;width:20.4px;height:14.0px;background:#fff;border:1.8px solid #adadad;"></div>
<svg class="r" style="left:1880.0px;top:972.0px;" width="6" height="9" viewBox="0 0 6 9"><path d="M0.5 0V9L6 4.5Z" fill="#777"/></svg>
<div class="r" style="left:1897.0px;top:211.0px;width:9.0px;height:757.6px;background:#e3e3e3;"></div>
<div class="r" style="left:1897.0px;top:214.0px;width:10.0px;height:20.0px;background:#fff;border:1.8px solid #adadad;"></div>
<div class="r" style="left:1897.0px;top:382.4px;width:10.0px;height:350.4px;background:#fff;border:1.8px solid #adadad;"></div>
<div class="r" style="left:1897.0px;top:896.0px;width:10.0px;height:20.8px;background:#fff;border:1.8px solid #adadad;"></div>
<div class="r" style="left:1897.0px;top:916.8px;width:10.0px;height:52.0px;background:#f0f0f0;"></div>
<div class="r" style="left:1898.0px;top:920.5px;width:8.0px;height:22.0px;background:#f7f7f7;"></div>
<div class="r" style="left:1898.0px;top:945.0px;width:8.0px;height:22.0px;background:#f7f7f7;"></div>
<svg class="r" style="left:570px;top:588px" width="230" height="122" viewBox="570 588 230 122"><path d="M579 668.6 L753.6 620.4 L746.6 596.2 Q745.8 593.2 749 594.2 L791 608.6 Q794.2 609.8 792.6 612.6 L771 649.4 Q769.4 652 768 649 L757.6 627 L595 702.6 Q592 704.4 590.6 701.4 L577.2 672.2 Q576 669.4 579 668.6Z" fill="#2b80e9"/></svg>
<svg class="r" style="left:1715.5px;top:939.5px" width="24" height="24" viewBox="0 0 24 24"><defs><linearGradient id="lg" x1="0" y1="1" x2="1" y2="0"><stop offset="0" stop-color="#1769e8"/><stop offset="1" stop-color="#22c3f6"/></linearGradient></defs><rect x="0" y="0" width="23.6" height="23.6" rx="5.5" fill="url(#lg)"/><text x="11.8" y="18.6" text-anchor="middle" font-family="Liberation Sans,sans-serif" font-weight="bold" font-size="17.5" fill="#fff" stroke="#fff" stroke-width="0.7">T</text></svg>
<span class="t" style="left:1744.9px;top:944.1px;font-size:17px;line-height:17px;letter-spacing:1.15px;color:#0a0a0a;-webkit-text-stroke:0.55px #0a0a0a;font-weight:bold;">TEMPLATE</span>
<span class="t" style="left:1843.1px;top:944.1px;font-size:17px;line-height:17px;letter-spacing:0.44px;color:#111;-webkit-text-stroke:0.1px #111;">.NET</span>
<div class="r" style="left:802.0px;top:268.0px;width:520.0px;height:671.0px;background:#fff;border:10px solid #2b80e9;"></div>
<div class="r" style="left:836px;top:300.5px;width:454px;height:596.5px;border:1px dotted #9a9af0"></div>
<div class="r" style="left:842.7px;top:300.7px;width:440.1px;height:7.0px;background:#6f9191;"></div>
<span class="doc" style="left:846.2px;top:361.4px;font-size:8.5px;line-height:8.5px;color:#6f7c7c;-webkit-text-stroke:0.22px #6f7c7c;transform:scaleX(0.843)">Newsletter Date</span>
<span class="doc" style="left:958.7px;top:351.4px;font-size:24px;line-height:24px;color:#111;-webkit-text-stroke:0.22px #111;font-weight:bold;transform:scaleX(0.705)">Newsletter Title</span>
<span class="doc" style="left:955.9px;top:380.5px;font-size:16px;line-height:16px;color:#ffd45e;transform:scaleX(1.183)">&gt;&gt;</span>
<span class="doc" style="left:989.3px;top:382.8px;font-size:8.5px;line-height:8.5px;color:#7c8c8c;-webkit-text-stroke:0.22px #7c8c8c;transform:scaleX(0.827)">Business Name</span>
<span class="doc" style="left:846.2px;top:469.0px;font-size:9.5px;line-height:9.5px;color:#6d9a9a;-webkit-text-stroke:0.22px #6d9a9a;transform:scaleX(0.828)">Special points of interest:</span>
<span class="doc" style="left:951.0px;top:462.1px;font-size:13px;line-height:13px;color:#1a1a1a;-webkit-text-stroke:0.22px #1a1a1a;font-weight:bold;transform:scaleX(0.709)">Lead Story Headline</span>
<div class="r" style="left:847.0px;top:491.1px;width:4.4px;height:4.4px;background:#5b5656;border-radius:50%;"></div>
<span class="doc" style="left:861.0px;top:490.0px;font-size:8.5px;line-height:8.5px;color:#5b5656;-webkit-text-stroke:0.22px #5b5656;transform:scaleX(0.708)">Briefly highlight your point</span>
<span class="doc" style="left:861.0px;top:502.0px;font-size:8.5px;line-height:8.5px;color:#5b5656;-webkit-text-stroke:0.22px #5b5656;transform:scaleX(0.720)">of interest here.</span>
<div class="r" style="left:847.0px;top:521.7px;width:4.4px;height:4.4px;background:#5b5656;border-radius:50%;"></div>
<span class="doc" style="left:861.0px;top:520.6px;font-size:8.5px;line-height:8.5px;color:#5b5656;-webkit-text-stroke:0.22px #5b5656;transform:scaleX(0.708)">Briefly highlight your point</span>
<span class="doc" style="left:861.0px;top:532.6px;font-size:8.5px;line-height:8.5px;color:#5b5656;-webkit-text-stroke:0.22px #5b5656;transform:scaleX(0.720)">of interest here.</span>
<div class="r" style="left:847.0px;top:551.6px;width:4.4px;height:4.4px;background:#5b5656;border-radius:50%;"></div>
<span class="doc" style="left:861.0px;top:550.5px;font-size:8.5px;line-height:8.5px;color:#5b5656;-webkit-text-stroke:0.22px #5b5656;transform:scaleX(0.708)">Briefly highlight your point</span>
<span class="doc" style="left:861.0px;top:562.5px;font-size:8.5px;line-height:8.5px;color:#5b5656;-webkit-text-stroke:0.22px #5b5656;transform:scaleX(0.720)">of interest here.</span>
<div class="r" style="left:847.0px;top:582.2px;width:4.4px;height:4.4px;background:#5b5656;border-radius:50%;"></div>
<span class="doc" style="left:861.0px;top:581.1px;font-size:8.5px;line-height:8.5px;color:#5b5656;-webkit-text-stroke:0.22px #5b5656;transform:scaleX(0.708)">Briefly highlight your point</span>
<span class="doc" style="left:861.0px;top:593.1px;font-size:8.5px;line-height:8.5px;color:#5b5656;-webkit-text-stroke:0.22px #5b5656;transform:scaleX(0.720)">of interest here.</span>
<span class="doc" style="left:951.0px;top:490.4px;font-size:8.5px;line-height:8.5px;color:#5b5656;-webkit-text-stroke:0.22px #5b5656;transform:scaleX(0.686)">This story can fit 175-225 words.</span>
<span class="doc" style="left:951.0px;top:507.0px;font-size:8.5px;line-height:8.5px;color:#5b5656;-webkit-text-stroke:0.22px #5b5656;transform:scaleX(0.686)">The purpose of a newsletter is to</span>
<span class="doc" style="left:951.0px;top:518.2px;font-size:8.5px;line-height:8.5px;color:#5b5656;-webkit-text-stroke:0.22px #5b5656;transform:scaleX(0.686)">provide specialized information to a</span>
<span class="doc" style="left:951.0px;top:529.5px;font-size:8.5px;line-height:8.5px;color:#5b5656;-webkit-text-stroke:0.22px #5b5656;transform:scaleX(0.686)">targeted audience. Newsletters can be</span>
<span class="doc" style="left:951.0px;top:540.7px;font-size:8.5px;line-height:8.5px;color:#5b5656;-webkit-text-stroke:0.22px #5b5656;transform:scaleX(0.686)">a great way to market your product or</span>
<span class="doc" style="left:951.0px;top:552.0px;font-size:8.5px;line-height:8.5px;color:#5b5656;-webkit-text-stroke:0.22px #5b5656;transform:scaleX(0.686)">service, and also create credibility and</span>
<span class="doc" style="left:951.0px;top:563.2px;font-size:8.5px;line-height:8.5px;color:#5b5656;-webkit-text-stroke:0.22px #5b5656;transform:scaleX(0.686)">build your organization's identity</span>
<span class="doc" style="left:951.0px;top:574.5px;font-size:8.5px;line-height:8.5px;color:#5b5656;-webkit-text-stroke:0.22px #5b5656;transform:scaleX(0.686)">among peers, members, employees, or</span>
<span class="doc" style="left:951.0px;top:585.0px;font-size:8.5px;line-height:8.5px;color:#5b5656;-webkit-text-stroke:0.22px #5b5656;transform:scaleX(0.686)">vendors.</span>
<span class="doc" style="left:951.0px;top:603.3px;font-size:8.5px;line-height:8.5px;color:#5b5656;-webkit-text-stroke:0.22px #5b5656;transform:scaleX(0.686)">First, determine the audience of the</span>
<span class="doc" style="left:951.0px;top:614.9px;font-size:8.5px;line-height:8.5px;color:#5b5656;-webkit-text-stroke:0.22px #5b5656;transform:scaleX(0.686)">newsletter. This could be anyone who</span>
<span class="doc" style="left:951.0px;top:626.2px;font-size:8.5px;line-height:8.5px;color:#5b5656;-webkit-text-stroke:0.22px #5b5656;transform:scaleX(0.686)">might benefit from the information it</span>
<span class="doc" style="left:951.0px;top:637.4px;font-size:8.5px;line-height:8.5px;color:#5b5656;-webkit-text-stroke:0.22px #5b5656;transform:scaleX(0.686)">contains, for example, employees or</span>
<span class="doc" style="left:951.0px;top:648.7px;font-size:8.5px;line-height:8.5px;color:#5b5656;-webkit-text-stroke:0.22px #5b5656;transform:scaleX(0.686)">people interested in purchasing a</span>
<span class="doc" style="left:951.0px;top:659.9px;font-size:8.5px;line-height:8.5px;color:#5b5656;-webkit-text-stroke:0.22px #5b5656;transform:scaleX(0.686)">product or requesting your service.</span>
<span class="doc" style="left:951.0px;top:676.8px;font-size:8.5px;line-height:8.5px;color:#5b5656;-webkit-text-stroke:0.22px #5b5656;transform:scaleX(0.686)">You can compile a mailing list from</span>
<span class="doc" style="left:951.0px;top:688.4px;font-size:8.5px;line-height:8.5px;color:#5b5656;-webkit-text-stroke:0.22px #5b5656;transform:scaleX(0.686)">business reply cards, customer infor-</span>
<span class="doc" style="left:951.0px;top:699.3px;font-size:8.5px;line-height:8.5px;color:#5b5656;-webkit-text-stroke:0.22px #5b5656;transform:scaleX(0.686)">mation sheets, business cards collect-</span>
<span class="doc" style="left:951.0px;top:710.2px;font-size:8.5px;line-height:8.5px;color:#5b5656;-webkit-text-stroke:0.22px #5b5656;transform:scaleX(0.686)">ed at trade shows, or membership</span>
<span class="doc" style="left:1064.9px;top:489.8px;font-size:8.5px;line-height:8.5px;color:#5b5656;-webkit-text-stroke:0.22px #5b5656;transform:scaleX(0.690)">lists. You might consider purchasing a</span>
<span class="doc" style="left:1064.9px;top:501.0px;font-size:8.5px;line-height:8.5px;color:#5b5656;-webkit-text-stroke:0.22px #5b5656;transform:scaleX(0.690)">mailing list from a company.</span>
<span class="doc" style="left:1064.9px;top:517.9px;font-size:8.5px;line-height:8.5px;color:#5b5656;-webkit-text-stroke:0.22px #5b5656;transform:scaleX(0.690)">If you explore the Publisher catalog,</span>
<span class="doc" style="left:1064.9px;top:529.1px;font-size:8.5px;line-height:8.5px;color:#5b5656;-webkit-text-stroke:0.22px #5b5656;transform:scaleX(0.690)">you will find many publications that</span>
<span class="doc" style="left:1064.9px;top:540.4px;font-size:8.5px;line-height:8.5px;color:#5b5656;-webkit-text-stroke:0.22px #5b5656;transform:scaleX(0.690)">match the style of your newsletter.</span>
<span class="doc" style="left:1064.9px;top:557.3px;font-size:8.5px;line-height:8.5px;color:#5b5656;-webkit-text-stroke:0.22px #5b5656;transform:scaleX(0.690)">Next, establish how much time and</span>
<span class="doc" style="left:1064.9px;top:568.5px;font-size:8.5px;line-height:8.5px;color:#5b5656;-webkit-text-stroke:0.22px #5b5656;transform:scaleX(0.690)">money you can spend on your newslet-</span>
<span class="doc" style="left:1064.9px;top:579.8px;font-size:8.5px;line-height:8.5px;color:#5b5656;-webkit-text-stroke:0.22px #5b5656;transform:scaleX(0.690)">ter. These factors will help determine</span>
<span class="doc" style="left:1064.9px;top:591.7px;font-size:8.5px;line-height:8.5px;color:#5b5656;-webkit-text-stroke:0.22px #5b5656;transform:scaleX(0.690)">how frequently you publish the news-</span>
<span class="doc" style="left:1064.9px;top:603.0px;font-size:8.5px;line-height:8.5px;color:#5b5656;-webkit-text-stroke:0.22px #5b5656;transform:scaleX(0.690)">letter and its length. It's recommended</span>
<span class="doc" style="left:1064.9px;top:614.9px;font-size:8.5px;line-height:8.5px;color:#5b5656;-webkit-text-stroke:0.22px #5b5656;transform:scaleX(0.690)">that you publish your newsletter at</span>
<span class="doc" style="left:1064.9px;top:626.2px;font-size:8.5px;line-height:8.5px;color:#5b5656;-webkit-text-stroke:0.22px #5b5656;transform:scaleX(0.690)">least quarterly so that it's considered</span>
<span class="doc" style="left:1064.9px;top:637.4px;font-size:8.5px;line-height:8.5px;color:#5b5656;-webkit-text-stroke:0.22px #5b5656;transform:scaleX(0.690)">a consistent source of information.</span>
<span class="doc" style="left:1064.9px;top:648.7px;font-size:8.5px;line-height:8.5px;color:#5b5656;-webkit-text-stroke:0.22px #5b5656;transform:scaleX(0.690)">Your customers or employees will look</span>
<span class="doc" style="left:1064.9px;top:659.9px;font-size:8.5px;line-height:8.5px;color:#5b5656;-webkit-text-stroke:0.22px #5b5656;transform:scaleX(0.690)">forward to its arrival.</span>
<span class="doc" style="left:846.2px;top:654.4px;font-size:9.5px;line-height:9.5px;color:#6d9a9a;-webkit-text-stroke:0.22px #6d9a9a;transform:scaleX(0.812)">Inside this issue:</span>
<svg class="r" style="left:840px;top:675px" width="98" height="179" viewBox="840 675 98 179"><path d="M842 676.9H935.9" stroke="#9c9c9c" stroke-width="0.6" stroke-dasharray="4.5 2.5" fill="none"/><path d="M842 700.8H935.9" stroke="#9c9c9c" stroke-width="0.6" stroke-dasharray="4.5 2.5" fill="none"/><path d="M842 724.7H935.9" stroke="#9c9c9c" stroke-width="0.6" stroke-dasharray="4.5 2.5" fill="none"/><path d="M842 754.2H935.9" stroke="#9c9c9c" stroke-width="0.6" stroke-dasharray="4.5 2.5" fill="none"/><path d="M842 778.1H935.9" stroke="#9c9c9c" stroke-width="0.6" stroke-dasharray="4.5 2.5" fill="none"/><path d="M842 802.7H935.9" stroke="#9c9c9c" stroke-width="0.6" stroke-dasharray="4.5 2.5" fill="none"/><path d="M842 826.6H935.9" stroke="#9c9c9c" stroke-width="0.6" stroke-dasharray="4.5 2.5" fill="none"/><path d="M842 851.6H935.9" stroke="#9c9c9c" stroke-width="0.6" stroke-dasharray="4.5 2.5" fill="none"/><path d="M842 676.9V851.6" stroke="#9c9c9c" stroke-width="0.6" stroke-dasharray="4.5 2.5" fill="none"/><path d="M917.2 676.9V851.6" stroke="#9c9c9c" stroke-width="0.6" stroke-dasharray="4.5 2.5" fill="none"/><path d="M935.9 676.9V851.6" stroke="#9c9c9c" stroke-width="0.6" stroke-dasharray="4.5 2.5" fill="none"/></svg>
<span class="doc" style="left:846.2px;top:682.7px;font-size:8px;line-height:8px;color:#5b5656;-webkit-text-stroke:0.22px #5b5656;transform:scaleX(0.724)">Inside Story</span>
<span class="doc" style="left:921.3px;top:682.3px;font-size:4.5px;line-height:4.5px;color:#5b5656;-webkit-text-stroke:0.22px #5b5656;transform:scaleX(0.800)">2</span>
<span class="doc" style="left:846.2px;top:706.6px;font-size:8px;line-height:8px;color:#5b5656;-webkit-text-stroke:0.22px #5b5656;transform:scaleX(0.724)">Inside Story</span>
<span class="doc" style="left:921.3px;top:706.2px;font-size:4.5px;line-height:4.5px;color:#5b5656;-webkit-text-stroke:0.22px #5b5656;transform:scaleX(0.800)">3</span>
<span class="doc" style="left:846.2px;top:730.5px;font-size:8px;line-height:8px;color:#5b5656;-webkit-text-stroke:0.22px #5b5656;transform:scaleX(0.724)">Inside Story</span>
<span class="doc" style="left:921.3px;top:730.1px;font-size:4.5px;line-height:4.5px;color:#5b5656;-webkit-text-stroke:0.22px #5b5656;transform:scaleX(0.800)">4</span>
<span class="doc" style="left:846.2px;top:759.7px;font-size:8px;line-height:8px;color:#5b5656;-webkit-text-stroke:0.22px #5b5656;transform:scaleX(0.724)">Inside Story</span>
<span class="doc" style="left:921.3px;top:759.3px;font-size:4.5px;line-height:4.5px;color:#5b5656;-webkit-text-stroke:0.22px #5b5656;transform:scaleX(0.800)">5</span>
<span class="doc" style="left:846.2px;top:783.2px;font-size:8px;line-height:8px;color:#5b5656;-webkit-text-stroke:0.22px #5b5656;transform:scaleX(0.724)">Inside Story</span>
<span class="doc" style="left:921.3px;top:782.8px;font-size:4.5px;line-height:4.5px;color:#5b5656;-webkit-text-stroke:0.22px #5b5656;transform:scaleX(0.800)">6</span>
<span class="doc" style="left:846.2px;top:808.9px;font-size:8px;line-height:8px;color:#5b5656;-webkit-text-stroke:0.22px #5b5656;transform:scaleX(0.724)">Inside Story</span>
<span class="doc" style="left:921.3px;top:808.5px;font-size:4.5px;line-height:4.5px;color:#5b5656;-webkit-text-stroke:0.22px #5b5656;transform:scaleX(0.800)">7</span>
<span class="doc" style="left:846.2px;top:832.4px;font-size:8px;line-height:8px;color:#5b5656;-webkit-text-stroke:0.22px #5b5656;transform:scaleX(0.724)">Inside Story</span>
<span class="doc" style="left:921.3px;top:832.0px;font-size:4.5px;line-height:4.5px;color:#5b5656;-webkit-text-stroke:0.22px #5b5656;transform:scaleX(0.800)">8</span>
<span class="doc" style="left:951.0px;top:746.6px;font-size:13px;line-height:13px;color:#1a1a1a;-webkit-text-stroke:0.22px #1a1a1a;font-weight:bold;transform:scaleX(0.709)">Secondary Story Headline</span>
<span class="doc" style="left:951.0px;top:769.6px;font-size:8.5px;line-height:8.5px;color:#5b5656;-webkit-text-stroke:0.22px #5b5656;transform:scaleX(0.733)">This story can fit 75-125 words.</span>
<span class="doc" style="left:951.0px;top:786.0px;font-size:8.5px;line-height:8.5px;color:#5b5656;-webkit-text-stroke:0.22px #5b5656;transform:scaleX(0.733)">Your headline is an important part of</span>
<span class="doc" style="left:951.0px;top:797.3px;font-size:8.5px;line-height:8.5px;color:#5b5656;-webkit-text-stroke:0.22px #5b5656;transform:scaleX(0.733)">the newsletter and should be consid-</span>
<span class="doc" style="left:951.0px;top:808.6px;font-size:8.5px;line-height:8.5px;color:#5b5656;-webkit-text-stroke:0.22px #5b5656;transform:scaleX(0.733)">ered carefully.</span>
<span class="doc" style="left:951.0px;top:825.5px;font-size:8.5px;line-height:8.5px;color:#5b5656;-webkit-text-stroke:0.22px #5b5656;transform:scaleX(0.733)">In a few words, it should accurately</span>
<span class="doc" style="left:951.0px;top:836.7px;font-size:8.5px;line-height:8.5px;color:#5b5656;-webkit-text-stroke:0.22px #5b5656;transform:scaleX(0.733)">represent the contents of the story</span>
<span class="doc" style="left:1064.9px;top:769.6px;font-size:8.5px;line-height:8.5px;color:#5b5656;-webkit-text-stroke:0.22px #5b5656;transform:scaleX(0.688)">and draw readers into the story. De-</span>
<span class="doc" style="left:1064.9px;top:780.5px;font-size:8.5px;line-height:8.5px;color:#5b5656;-webkit-text-stroke:0.22px #5b5656;transform:scaleX(0.688)">velop the headline before you write the</span>
<span class="doc" style="left:1064.9px;top:791.7px;font-size:8.5px;line-height:8.5px;color:#5b5656;-webkit-text-stroke:0.22px #5b5656;transform:scaleX(0.688)">story. This way, the headline will help</span>
<span class="doc" style="left:1064.9px;top:803.3px;font-size:8.5px;line-height:8.5px;color:#5b5656;-webkit-text-stroke:0.22px #5b5656;transform:scaleX(0.688)">you keep the story focused.</span>
<span class="doc" style="left:1064.9px;top:819.8px;font-size:8.5px;line-height:8.5px;color:#5b5656;-webkit-text-stroke:0.22px #5b5656;transform:scaleX(0.688)">Examples of possible headlines include</span>
<span class="doc" style="left:1064.9px;top:830.7px;font-size:8.5px;line-height:8.5px;color:#5b5656;-webkit-text-stroke:0.22px #5b5656;transform:scaleX(0.688)">Product Wins Industry Award, New</span>
<span class="doc" style="left:1178.4px;top:769.6px;font-size:8.5px;line-height:8.5px;color:#5b5656;-webkit-text-stroke:0.22px #5b5656;transform:scaleX(0.680)">Product Can Save You Time!, Member-</span>
<span class="doc" style="left:1178.4px;top:780.5px;font-size:8.5px;line-height:8.5px;color:#5b5656;-webkit-text-stroke:0.22px #5b5656;transform:scaleX(0.680)">ship Drive Exceeds Goals, and New</span>
<span class="doc" style="left:1178.4px;top:791.7px;font-size:8.5px;line-height:8.5px;color:#5b5656;-webkit-text-stroke:0.22px #5b5656;transform:scaleX(0.680)">Office Opens Near You.</span>
<svg class="r" style="left:842.7px;top:870.9px" width="440.1" height="25.7" viewBox="0 0 440.1 25.7"><rect width="440.1" height="25.7" fill="#ffc933"/><ellipse cx="312.8" cy="-4" rx="58" ry="44" fill="#ffe599"/></svg>
<svg class="r" style="left:1185px;top:489.6px" width="90.8" height="174.7" viewBox="50 48 452 870" preserveAspectRatio="none"><rect x="50" y="48" width="452" height="870" fill="#8ccaca"/><path d="M50 400Q170 350 290 400L300 450Q170 395 50 455Z" fill="#9dd3d3"/><path d="M50 560Q180 500 330 590L330 640Q180 560 50 620Z" fill="#7bbfc0"/><path d="M130 48H502V135L268 290Q250 160 130 48Z" fill="#90d3b5"/><path d="M50 48H138Q240 150 266 288Q150 300 50 362Z" fill="#0b808c"/><path d="M268 290L502 132V692H322Q325 480 268 290Z" fill="#7a8673"/><path d="M502 172L420 215L330 268L292 318L300 338L322 318L312 352L340 328L338 368L366 332L372 362L398 318L502 262Z" fill="#f8d09d"/><path d="M50 722Q190 680 322 692V918H50Z" fill="#5f8c83"/><path d="M70 750L110 735M60 800L100 780M90 850L130 830M150 720L185 708M240 860L290 840M250 790L300 770M60 880L95 865" stroke="#7aa79b" stroke-width="7"/><path d="M322 692H502V918H300Z" fill="#82c8c8"/><path d="M100 918Q125 800 205 722L222 700L232 722L256 698L258 728L286 702L282 742L312 722L262 790L286 800L232 842L250 862L215 880L212 918Z" fill="#f9c164"/><circle cx="118" cy="222" r="40" fill="#f3ef96"/><circle cx="138" cy="208" r="33" fill="#5aa4a8"/><path d="M61 130H89M75 116V144" stroke="#63b6aa" stroke-width="6" transform="rotate(22 75 130)"/><path d="M146 145H174M160 131V159" stroke="#63b6aa" stroke-width="6" transform="rotate(22 160 145)"/><path d="M186 242H214M200 228V256" stroke="#63b6aa" stroke-width="6" transform="rotate(22 200 242)"/><path d="M78 308H106M92 294V322" stroke="#63b6aa" stroke-width="6" transform="rotate(22 92 308)"/><path d="M277 100A22 22 0 1 0 255 122" fill="none" stroke="#4d8f8f" stroke-width="7"/><circle cx="257" cy="102" r="7.3" fill="#4d8f8f"/><path d="M432 110A27 27 0 1 0 405 137" fill="none" stroke="#4d8f8f" stroke-width="7"/><circle cx="407" cy="112" r="8.9" fill="#4d8f8f"/><path d="M340 183A18 18 0 1 0 322 201" fill="none" stroke="#4d8f8f" stroke-width="7"/><circle cx="324" cy="185" r="5.9" fill="#4d8f8f"/><path d="M400 560L452 498L458 526L412 588Z" fill="#3f6182"/><path d="M228 612L302 598L304 622L238 636Z" fill="#c29b5b"/><path d="M204 586L332 572L338 610L216 622Z" fill="#c9d2e2"/><path d="M135 446L312 420L350 576L176 592Z" fill="#f7f8f8"/><path d="M338 442L404 350L466 466L380 592L350 576Z" fill="#fffde6"/><path d="M312 420L340 440L356 580L350 576Z" fill="#d4d6d8"/><path d="M178 462L270 450M186 492L280 478M196 522L290 508M206 550L296 538" stroke="#d3d6d8" stroke-width="4"/><circle cx="370" cy="745" r="30" fill="#fbfbfb" stroke="#8c9a9a" stroke-width="6"/><circle cx="460" cy="825" r="33" fill="#fbfbfb" stroke="#8c9a9a" stroke-width="6"/><circle cx="483" cy="736" r="18" fill="#f0efb8" stroke="#a5b0a0" stroke-width="4"/><circle cx="366" cy="880" r="14" fill="#f0efb8" stroke="#a5b0a0" stroke-width="4"/><circle cx="334" cy="886" r="10" fill="#5f9aa0"/><path d="M385 860L412 822M400 872L425 838M418 770L438 745" stroke="#5fa5a8" stroke-width="5"/><path d="M356 748Q366 732 384 742M446 828Q458 812 474 824" fill="none" stroke="#a8b2b2" stroke-width="4"/></svg>
<span class="doc" style="left:1189.0px;top:670.3px;font-size:7.5px;line-height:7.5px;color:#5b5656;-webkit-text-stroke:0.22px #5b5656;transform:scaleX(0.770)">Caption describing picture or</span>
<span class="doc" style="left:1189.0px;top:680.2px;font-size:7.5px;line-height:7.5px;color:#5b5656;-webkit-text-stroke:0.22px #5b5656;transform:scaleX(0.731)">graphic.</span>
<svg class="r" style="left:1175px;top:450px" width="115" height="265" viewBox="1175 450 115 265"><rect x="1185.4" y="488.6" width="95.6" height="216.4" fill="none" stroke="#4a6f9a" stroke-width="1.3"/><path d="M1233.1 465V488" stroke="#111" stroke-width="1.6"/><circle cx="1233.1" cy="459.7" r="5.4" fill="#fff" stroke="#777" stroke-width="1.1"/><circle cx="1185.4" cy="488.6" r="5.4" fill="#fff" stroke="#777" stroke-width="1.1"/><circle cx="1281" cy="488.6" r="5.4" fill="#fff" stroke="#777" stroke-width="1.1"/><circle cx="1185.4" cy="705" r="5.4" fill="#fff" stroke="#777" stroke-width="1.1"/><circle cx="1281" cy="705" r="5.4" fill="#fff" stroke="#777" stroke-width="1.1"/><rect x="1229.1" y="484.6" width="8" height="8" fill="#fff" stroke="#4a6f9a" stroke-width="1.2"/><rect x="1181.4" y="592.8" width="8" height="8" fill="#fff" stroke="#4a6f9a" stroke-width="1.2"/><rect x="1277" y="592.8" width="8" height="8" fill="#fff" stroke="#4a6f9a" stroke-width="1.2"/><rect x="1229.1" y="701" width="8" height="8" fill="#fff" stroke="#4a6f9a" stroke-width="1.2"/></svg>
</div></div>
</body></html>
